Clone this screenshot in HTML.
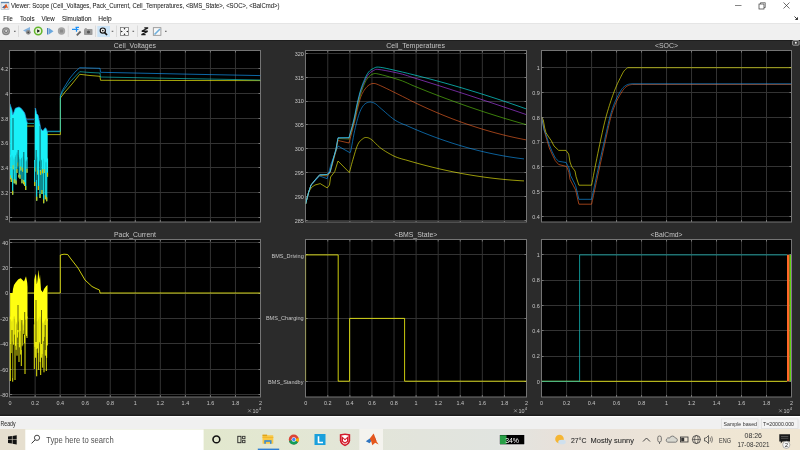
<!DOCTYPE html>
<html><head><meta charset="utf-8"><style>
html,body{margin:0;padding:0;width:800px;height:450px;overflow:hidden;background:#2b2b2b;}
svg#plots{position:absolute;left:0;top:0;will-change:transform;}
.tk{font-size:5.45px;fill:#c6c6c6;}
.ti{font-size:7.4px;fill:#c8c8c8;}
</style></head><body>
<svg id="plots" width="800" height="450" viewBox="0 0 800 450" font-family='"Liberation Sans", sans-serif'>
<defs><linearGradient id="tg" x1="0" x2="1" y1="0" y2="0"><stop offset="0" stop-color="#e4e8d2"/><stop offset="0.25" stop-color="#e2e8cd"/><stop offset="0.41" stop-color="#e3e6d6"/><stop offset="0.525" stop-color="#e2e4dc"/><stop offset="0.625" stop-color="#e1e4e0"/><stop offset="0.7" stop-color="#e8e1da"/><stop offset="0.8" stop-color="#ebe3d8"/><stop offset="0.9" stop-color="#efe6d4"/><stop offset="1" stop-color="#f0e6d2"/></linearGradient><clipPath id="cv"><rect x="10.1" y="50.5" width="250.4" height="171.5"/></clipPath><clipPath id="ct"><rect x="305.7" y="50.5" width="220.8" height="171.5"/></clipPath><clipPath id="cs"><rect x="541.6" y="50.5" width="249.89999999999998" height="171.5"/></clipPath><clipPath id="ci"><rect x="10.1" y="239.5" width="250.4" height="157.5"/></clipPath><clipPath id="cb"><rect x="305.7" y="239.5" width="220.8" height="157.5"/></clipPath><clipPath id="cc"><rect x="541.6" y="239.5" width="249.89999999999998" height="157.5"/></clipPath></defs>
<rect x="0" y="40" width="800" height="376" fill="#2b2b2b"/>
<rect x="0" y="40" width="800" height="1" fill="#1e1e1e"/>
<rect x="10.1" y="50.5" width="250.4" height="171.5" fill="#000"/><line x1="35.14" y1="50.5" x2="35.14" y2="222" stroke="#333333" stroke-width="1"/><line x1="35.14" y1="222" x2="35.14" y2="220" stroke="#8a8a8a" stroke-width="0.8"/><line x1="35.14" y1="50.5" x2="35.14" y2="52.5" stroke="#8a8a8a" stroke-width="0.8"/><line x1="60.18" y1="50.5" x2="60.18" y2="222" stroke="#333333" stroke-width="1"/><line x1="60.18" y1="222" x2="60.18" y2="220" stroke="#8a8a8a" stroke-width="0.8"/><line x1="60.18" y1="50.5" x2="60.18" y2="52.5" stroke="#8a8a8a" stroke-width="0.8"/><line x1="85.22" y1="50.5" x2="85.22" y2="222" stroke="#333333" stroke-width="1"/><line x1="85.22" y1="222" x2="85.22" y2="220" stroke="#8a8a8a" stroke-width="0.8"/><line x1="85.22" y1="50.5" x2="85.22" y2="52.5" stroke="#8a8a8a" stroke-width="0.8"/><line x1="110.26" y1="50.5" x2="110.26" y2="222" stroke="#333333" stroke-width="1"/><line x1="110.26" y1="222" x2="110.26" y2="220" stroke="#8a8a8a" stroke-width="0.8"/><line x1="110.26" y1="50.5" x2="110.26" y2="52.5" stroke="#8a8a8a" stroke-width="0.8"/><line x1="135.30" y1="50.5" x2="135.30" y2="222" stroke="#333333" stroke-width="1"/><line x1="135.30" y1="222" x2="135.30" y2="220" stroke="#8a8a8a" stroke-width="0.8"/><line x1="135.30" y1="50.5" x2="135.30" y2="52.5" stroke="#8a8a8a" stroke-width="0.8"/><line x1="160.34" y1="50.5" x2="160.34" y2="222" stroke="#333333" stroke-width="1"/><line x1="160.34" y1="222" x2="160.34" y2="220" stroke="#8a8a8a" stroke-width="0.8"/><line x1="160.34" y1="50.5" x2="160.34" y2="52.5" stroke="#8a8a8a" stroke-width="0.8"/><line x1="185.38" y1="50.5" x2="185.38" y2="222" stroke="#333333" stroke-width="1"/><line x1="185.38" y1="222" x2="185.38" y2="220" stroke="#8a8a8a" stroke-width="0.8"/><line x1="185.38" y1="50.5" x2="185.38" y2="52.5" stroke="#8a8a8a" stroke-width="0.8"/><line x1="210.42" y1="50.5" x2="210.42" y2="222" stroke="#333333" stroke-width="1"/><line x1="210.42" y1="222" x2="210.42" y2="220" stroke="#8a8a8a" stroke-width="0.8"/><line x1="210.42" y1="50.5" x2="210.42" y2="52.5" stroke="#8a8a8a" stroke-width="0.8"/><line x1="235.46" y1="50.5" x2="235.46" y2="222" stroke="#333333" stroke-width="1"/><line x1="235.46" y1="222" x2="235.46" y2="220" stroke="#8a8a8a" stroke-width="0.8"/><line x1="235.46" y1="50.5" x2="235.46" y2="52.5" stroke="#8a8a8a" stroke-width="0.8"/><line x1="10.1" y1="217.50" x2="260.5" y2="217.50" stroke="#333333" stroke-width="1"/><line x1="10.1" y1="217.50" x2="12.1" y2="217.50" stroke="#8a8a8a" stroke-width="0.8"/><line x1="260.5" y1="217.50" x2="258.5" y2="217.50" stroke="#8a8a8a" stroke-width="0.8"/><text x="8.2" y="219.60" text-anchor="end" class="tk">3</text><line x1="10.1" y1="192.50" x2="260.5" y2="192.50" stroke="#333333" stroke-width="1"/><line x1="10.1" y1="192.50" x2="12.1" y2="192.50" stroke="#8a8a8a" stroke-width="0.8"/><line x1="260.5" y1="192.50" x2="258.5" y2="192.50" stroke="#8a8a8a" stroke-width="0.8"/><text x="8.2" y="194.88" text-anchor="end" class="tk">3.2</text><line x1="10.1" y1="167.50" x2="260.5" y2="167.50" stroke="#333333" stroke-width="1"/><line x1="10.1" y1="167.50" x2="12.1" y2="167.50" stroke="#8a8a8a" stroke-width="0.8"/><line x1="260.5" y1="167.50" x2="258.5" y2="167.50" stroke="#8a8a8a" stroke-width="0.8"/><text x="8.2" y="170.17" text-anchor="end" class="tk">3.4</text><line x1="10.1" y1="143.50" x2="260.5" y2="143.50" stroke="#333333" stroke-width="1"/><line x1="10.1" y1="143.50" x2="12.1" y2="143.50" stroke="#8a8a8a" stroke-width="0.8"/><line x1="260.5" y1="143.50" x2="258.5" y2="143.50" stroke="#8a8a8a" stroke-width="0.8"/><text x="8.2" y="145.45" text-anchor="end" class="tk">3.6</text><line x1="10.1" y1="118.50" x2="260.5" y2="118.50" stroke="#333333" stroke-width="1"/><line x1="10.1" y1="118.50" x2="12.1" y2="118.50" stroke="#8a8a8a" stroke-width="0.8"/><line x1="260.5" y1="118.50" x2="258.5" y2="118.50" stroke="#8a8a8a" stroke-width="0.8"/><text x="8.2" y="120.73" text-anchor="end" class="tk">3.8</text><line x1="10.1" y1="93.50" x2="260.5" y2="93.50" stroke="#333333" stroke-width="1"/><line x1="10.1" y1="93.50" x2="12.1" y2="93.50" stroke="#8a8a8a" stroke-width="0.8"/><line x1="260.5" y1="93.50" x2="258.5" y2="93.50" stroke="#8a8a8a" stroke-width="0.8"/><text x="8.2" y="96.02" text-anchor="end" class="tk">4</text><line x1="10.1" y1="68.50" x2="260.5" y2="68.50" stroke="#333333" stroke-width="1"/><line x1="10.1" y1="68.50" x2="12.1" y2="68.50" stroke="#8a8a8a" stroke-width="0.8"/><line x1="260.5" y1="68.50" x2="258.5" y2="68.50" stroke="#8a8a8a" stroke-width="0.8"/><text x="8.2" y="71.30" text-anchor="end" class="tk">4.2</text><rect x="305.7" y="50.5" width="220.8" height="171.5" fill="#000"/><line x1="327.78" y1="50.5" x2="327.78" y2="222" stroke="#333333" stroke-width="1"/><line x1="327.78" y1="222" x2="327.78" y2="220" stroke="#8a8a8a" stroke-width="0.8"/><line x1="327.78" y1="50.5" x2="327.78" y2="52.5" stroke="#8a8a8a" stroke-width="0.8"/><line x1="349.86" y1="50.5" x2="349.86" y2="222" stroke="#333333" stroke-width="1"/><line x1="349.86" y1="222" x2="349.86" y2="220" stroke="#8a8a8a" stroke-width="0.8"/><line x1="349.86" y1="50.5" x2="349.86" y2="52.5" stroke="#8a8a8a" stroke-width="0.8"/><line x1="371.94" y1="50.5" x2="371.94" y2="222" stroke="#333333" stroke-width="1"/><line x1="371.94" y1="222" x2="371.94" y2="220" stroke="#8a8a8a" stroke-width="0.8"/><line x1="371.94" y1="50.5" x2="371.94" y2="52.5" stroke="#8a8a8a" stroke-width="0.8"/><line x1="394.02" y1="50.5" x2="394.02" y2="222" stroke="#333333" stroke-width="1"/><line x1="394.02" y1="222" x2="394.02" y2="220" stroke="#8a8a8a" stroke-width="0.8"/><line x1="394.02" y1="50.5" x2="394.02" y2="52.5" stroke="#8a8a8a" stroke-width="0.8"/><line x1="416.10" y1="50.5" x2="416.10" y2="222" stroke="#333333" stroke-width="1"/><line x1="416.10" y1="222" x2="416.10" y2="220" stroke="#8a8a8a" stroke-width="0.8"/><line x1="416.10" y1="50.5" x2="416.10" y2="52.5" stroke="#8a8a8a" stroke-width="0.8"/><line x1="438.18" y1="50.5" x2="438.18" y2="222" stroke="#333333" stroke-width="1"/><line x1="438.18" y1="222" x2="438.18" y2="220" stroke="#8a8a8a" stroke-width="0.8"/><line x1="438.18" y1="50.5" x2="438.18" y2="52.5" stroke="#8a8a8a" stroke-width="0.8"/><line x1="460.26" y1="50.5" x2="460.26" y2="222" stroke="#333333" stroke-width="1"/><line x1="460.26" y1="222" x2="460.26" y2="220" stroke="#8a8a8a" stroke-width="0.8"/><line x1="460.26" y1="50.5" x2="460.26" y2="52.5" stroke="#8a8a8a" stroke-width="0.8"/><line x1="482.34" y1="50.5" x2="482.34" y2="222" stroke="#333333" stroke-width="1"/><line x1="482.34" y1="222" x2="482.34" y2="220" stroke="#8a8a8a" stroke-width="0.8"/><line x1="482.34" y1="50.5" x2="482.34" y2="52.5" stroke="#8a8a8a" stroke-width="0.8"/><line x1="504.42" y1="50.5" x2="504.42" y2="222" stroke="#333333" stroke-width="1"/><line x1="504.42" y1="222" x2="504.42" y2="220" stroke="#8a8a8a" stroke-width="0.8"/><line x1="504.42" y1="50.5" x2="504.42" y2="52.5" stroke="#8a8a8a" stroke-width="0.8"/><line x1="305.7" y1="220.50" x2="526.5" y2="220.50" stroke="#333333" stroke-width="1"/><line x1="305.7" y1="220.50" x2="307.7" y2="220.50" stroke="#8a8a8a" stroke-width="0.8"/><line x1="526.5" y1="220.50" x2="524.5" y2="220.50" stroke="#8a8a8a" stroke-width="0.8"/><text x="303.8" y="222.60" text-anchor="end" class="tk">285</text><line x1="305.7" y1="196.50" x2="526.5" y2="196.50" stroke="#333333" stroke-width="1"/><line x1="305.7" y1="196.50" x2="307.7" y2="196.50" stroke="#8a8a8a" stroke-width="0.8"/><line x1="526.5" y1="196.50" x2="524.5" y2="196.50" stroke="#8a8a8a" stroke-width="0.8"/><text x="303.8" y="198.76" text-anchor="end" class="tk">290</text><line x1="305.7" y1="172.50" x2="526.5" y2="172.50" stroke="#333333" stroke-width="1"/><line x1="305.7" y1="172.50" x2="307.7" y2="172.50" stroke="#8a8a8a" stroke-width="0.8"/><line x1="526.5" y1="172.50" x2="524.5" y2="172.50" stroke="#8a8a8a" stroke-width="0.8"/><text x="303.8" y="174.91" text-anchor="end" class="tk">295</text><line x1="305.7" y1="148.50" x2="526.5" y2="148.50" stroke="#333333" stroke-width="1"/><line x1="305.7" y1="148.50" x2="307.7" y2="148.50" stroke="#8a8a8a" stroke-width="0.8"/><line x1="526.5" y1="148.50" x2="524.5" y2="148.50" stroke="#8a8a8a" stroke-width="0.8"/><text x="303.8" y="151.07" text-anchor="end" class="tk">300</text><line x1="305.7" y1="124.50" x2="526.5" y2="124.50" stroke="#333333" stroke-width="1"/><line x1="305.7" y1="124.50" x2="307.7" y2="124.50" stroke="#8a8a8a" stroke-width="0.8"/><line x1="526.5" y1="124.50" x2="524.5" y2="124.50" stroke="#8a8a8a" stroke-width="0.8"/><text x="303.8" y="127.23" text-anchor="end" class="tk">305</text><line x1="305.7" y1="101.50" x2="526.5" y2="101.50" stroke="#333333" stroke-width="1"/><line x1="305.7" y1="101.50" x2="307.7" y2="101.50" stroke="#8a8a8a" stroke-width="0.8"/><line x1="526.5" y1="101.50" x2="524.5" y2="101.50" stroke="#8a8a8a" stroke-width="0.8"/><text x="303.8" y="103.39" text-anchor="end" class="tk">310</text><line x1="305.7" y1="77.50" x2="526.5" y2="77.50" stroke="#333333" stroke-width="1"/><line x1="305.7" y1="77.50" x2="307.7" y2="77.50" stroke="#8a8a8a" stroke-width="0.8"/><line x1="526.5" y1="77.50" x2="524.5" y2="77.50" stroke="#8a8a8a" stroke-width="0.8"/><text x="303.8" y="79.54" text-anchor="end" class="tk">315</text><line x1="305.7" y1="53.50" x2="526.5" y2="53.50" stroke="#333333" stroke-width="1"/><line x1="305.7" y1="53.50" x2="307.7" y2="53.50" stroke="#8a8a8a" stroke-width="0.8"/><line x1="526.5" y1="53.50" x2="524.5" y2="53.50" stroke="#8a8a8a" stroke-width="0.8"/><text x="303.8" y="55.70" text-anchor="end" class="tk">320</text><rect x="541.6" y="50.5" width="249.89999999999998" height="171.5" fill="#000"/><line x1="566.59" y1="50.5" x2="566.59" y2="222" stroke="#333333" stroke-width="1"/><line x1="566.59" y1="222" x2="566.59" y2="220" stroke="#8a8a8a" stroke-width="0.8"/><line x1="566.59" y1="50.5" x2="566.59" y2="52.5" stroke="#8a8a8a" stroke-width="0.8"/><line x1="591.58" y1="50.5" x2="591.58" y2="222" stroke="#333333" stroke-width="1"/><line x1="591.58" y1="222" x2="591.58" y2="220" stroke="#8a8a8a" stroke-width="0.8"/><line x1="591.58" y1="50.5" x2="591.58" y2="52.5" stroke="#8a8a8a" stroke-width="0.8"/><line x1="616.57" y1="50.5" x2="616.57" y2="222" stroke="#333333" stroke-width="1"/><line x1="616.57" y1="222" x2="616.57" y2="220" stroke="#8a8a8a" stroke-width="0.8"/><line x1="616.57" y1="50.5" x2="616.57" y2="52.5" stroke="#8a8a8a" stroke-width="0.8"/><line x1="641.56" y1="50.5" x2="641.56" y2="222" stroke="#333333" stroke-width="1"/><line x1="641.56" y1="222" x2="641.56" y2="220" stroke="#8a8a8a" stroke-width="0.8"/><line x1="641.56" y1="50.5" x2="641.56" y2="52.5" stroke="#8a8a8a" stroke-width="0.8"/><line x1="666.55" y1="50.5" x2="666.55" y2="222" stroke="#333333" stroke-width="1"/><line x1="666.55" y1="222" x2="666.55" y2="220" stroke="#8a8a8a" stroke-width="0.8"/><line x1="666.55" y1="50.5" x2="666.55" y2="52.5" stroke="#8a8a8a" stroke-width="0.8"/><line x1="691.54" y1="50.5" x2="691.54" y2="222" stroke="#333333" stroke-width="1"/><line x1="691.54" y1="222" x2="691.54" y2="220" stroke="#8a8a8a" stroke-width="0.8"/><line x1="691.54" y1="50.5" x2="691.54" y2="52.5" stroke="#8a8a8a" stroke-width="0.8"/><line x1="716.53" y1="50.5" x2="716.53" y2="222" stroke="#333333" stroke-width="1"/><line x1="716.53" y1="222" x2="716.53" y2="220" stroke="#8a8a8a" stroke-width="0.8"/><line x1="716.53" y1="50.5" x2="716.53" y2="52.5" stroke="#8a8a8a" stroke-width="0.8"/><line x1="741.52" y1="50.5" x2="741.52" y2="222" stroke="#333333" stroke-width="1"/><line x1="741.52" y1="222" x2="741.52" y2="220" stroke="#8a8a8a" stroke-width="0.8"/><line x1="741.52" y1="50.5" x2="741.52" y2="52.5" stroke="#8a8a8a" stroke-width="0.8"/><line x1="766.51" y1="50.5" x2="766.51" y2="222" stroke="#333333" stroke-width="1"/><line x1="766.51" y1="222" x2="766.51" y2="220" stroke="#8a8a8a" stroke-width="0.8"/><line x1="766.51" y1="50.5" x2="766.51" y2="52.5" stroke="#8a8a8a" stroke-width="0.8"/><line x1="541.6" y1="216.50" x2="791.5" y2="216.50" stroke="#333333" stroke-width="1"/><line x1="541.6" y1="216.50" x2="543.6" y2="216.50" stroke="#8a8a8a" stroke-width="0.8"/><line x1="791.5" y1="216.50" x2="789.5" y2="216.50" stroke="#8a8a8a" stroke-width="0.8"/><text x="539.7" y="218.90" text-anchor="end" class="tk">0.4</text><line x1="541.6" y1="191.50" x2="791.5" y2="191.50" stroke="#333333" stroke-width="1"/><line x1="541.6" y1="191.50" x2="543.6" y2="191.50" stroke="#8a8a8a" stroke-width="0.8"/><line x1="791.5" y1="191.50" x2="789.5" y2="191.50" stroke="#8a8a8a" stroke-width="0.8"/><text x="539.7" y="194.08" text-anchor="end" class="tk">0.5</text><line x1="541.6" y1="166.50" x2="791.5" y2="166.50" stroke="#333333" stroke-width="1"/><line x1="541.6" y1="166.50" x2="543.6" y2="166.50" stroke="#8a8a8a" stroke-width="0.8"/><line x1="791.5" y1="166.50" x2="789.5" y2="166.50" stroke="#8a8a8a" stroke-width="0.8"/><text x="539.7" y="169.27" text-anchor="end" class="tk">0.6</text><line x1="541.6" y1="142.50" x2="791.5" y2="142.50" stroke="#333333" stroke-width="1"/><line x1="541.6" y1="142.50" x2="543.6" y2="142.50" stroke="#8a8a8a" stroke-width="0.8"/><line x1="791.5" y1="142.50" x2="789.5" y2="142.50" stroke="#8a8a8a" stroke-width="0.8"/><text x="539.7" y="144.45" text-anchor="end" class="tk">0.7</text><line x1="541.6" y1="117.50" x2="791.5" y2="117.50" stroke="#333333" stroke-width="1"/><line x1="541.6" y1="117.50" x2="543.6" y2="117.50" stroke="#8a8a8a" stroke-width="0.8"/><line x1="791.5" y1="117.50" x2="789.5" y2="117.50" stroke="#8a8a8a" stroke-width="0.8"/><text x="539.7" y="119.63" text-anchor="end" class="tk">0.8</text><line x1="541.6" y1="92.50" x2="791.5" y2="92.50" stroke="#333333" stroke-width="1"/><line x1="541.6" y1="92.50" x2="543.6" y2="92.50" stroke="#8a8a8a" stroke-width="0.8"/><line x1="791.5" y1="92.50" x2="789.5" y2="92.50" stroke="#8a8a8a" stroke-width="0.8"/><text x="539.7" y="94.82" text-anchor="end" class="tk">0.9</text><line x1="541.6" y1="67.50" x2="791.5" y2="67.50" stroke="#333333" stroke-width="1"/><line x1="541.6" y1="67.50" x2="543.6" y2="67.50" stroke="#8a8a8a" stroke-width="0.8"/><line x1="791.5" y1="67.50" x2="789.5" y2="67.50" stroke="#8a8a8a" stroke-width="0.8"/><text x="539.7" y="70.00" text-anchor="end" class="tk">1</text><rect x="10.1" y="239.5" width="250.4" height="157.5" fill="#000"/><line x1="35.14" y1="239.5" x2="35.14" y2="397" stroke="#333333" stroke-width="1"/><line x1="35.14" y1="397" x2="35.14" y2="395" stroke="#8a8a8a" stroke-width="0.8"/><line x1="35.14" y1="239.5" x2="35.14" y2="241.5" stroke="#8a8a8a" stroke-width="0.8"/><line x1="60.18" y1="239.5" x2="60.18" y2="397" stroke="#333333" stroke-width="1"/><line x1="60.18" y1="397" x2="60.18" y2="395" stroke="#8a8a8a" stroke-width="0.8"/><line x1="60.18" y1="239.5" x2="60.18" y2="241.5" stroke="#8a8a8a" stroke-width="0.8"/><line x1="85.22" y1="239.5" x2="85.22" y2="397" stroke="#333333" stroke-width="1"/><line x1="85.22" y1="397" x2="85.22" y2="395" stroke="#8a8a8a" stroke-width="0.8"/><line x1="85.22" y1="239.5" x2="85.22" y2="241.5" stroke="#8a8a8a" stroke-width="0.8"/><line x1="110.26" y1="239.5" x2="110.26" y2="397" stroke="#333333" stroke-width="1"/><line x1="110.26" y1="397" x2="110.26" y2="395" stroke="#8a8a8a" stroke-width="0.8"/><line x1="110.26" y1="239.5" x2="110.26" y2="241.5" stroke="#8a8a8a" stroke-width="0.8"/><line x1="135.30" y1="239.5" x2="135.30" y2="397" stroke="#333333" stroke-width="1"/><line x1="135.30" y1="397" x2="135.30" y2="395" stroke="#8a8a8a" stroke-width="0.8"/><line x1="135.30" y1="239.5" x2="135.30" y2="241.5" stroke="#8a8a8a" stroke-width="0.8"/><line x1="160.34" y1="239.5" x2="160.34" y2="397" stroke="#333333" stroke-width="1"/><line x1="160.34" y1="397" x2="160.34" y2="395" stroke="#8a8a8a" stroke-width="0.8"/><line x1="160.34" y1="239.5" x2="160.34" y2="241.5" stroke="#8a8a8a" stroke-width="0.8"/><line x1="185.38" y1="239.5" x2="185.38" y2="397" stroke="#333333" stroke-width="1"/><line x1="185.38" y1="397" x2="185.38" y2="395" stroke="#8a8a8a" stroke-width="0.8"/><line x1="185.38" y1="239.5" x2="185.38" y2="241.5" stroke="#8a8a8a" stroke-width="0.8"/><line x1="210.42" y1="239.5" x2="210.42" y2="397" stroke="#333333" stroke-width="1"/><line x1="210.42" y1="397" x2="210.42" y2="395" stroke="#8a8a8a" stroke-width="0.8"/><line x1="210.42" y1="239.5" x2="210.42" y2="241.5" stroke="#8a8a8a" stroke-width="0.8"/><line x1="235.46" y1="239.5" x2="235.46" y2="397" stroke="#333333" stroke-width="1"/><line x1="235.46" y1="397" x2="235.46" y2="395" stroke="#8a8a8a" stroke-width="0.8"/><line x1="235.46" y1="239.5" x2="235.46" y2="241.5" stroke="#8a8a8a" stroke-width="0.8"/><line x1="10.1" y1="394.50" x2="260.5" y2="394.50" stroke="#333333" stroke-width="1"/><line x1="10.1" y1="394.50" x2="12.1" y2="394.50" stroke="#8a8a8a" stroke-width="0.8"/><line x1="260.5" y1="394.50" x2="258.5" y2="394.50" stroke="#8a8a8a" stroke-width="0.8"/><text x="8.2" y="396.90" text-anchor="end" class="tk">-80</text><line x1="10.1" y1="369.50" x2="260.5" y2="369.50" stroke="#333333" stroke-width="1"/><line x1="10.1" y1="369.50" x2="12.1" y2="369.50" stroke="#8a8a8a" stroke-width="0.8"/><line x1="260.5" y1="369.50" x2="258.5" y2="369.50" stroke="#8a8a8a" stroke-width="0.8"/><text x="8.2" y="371.53" text-anchor="end" class="tk">-60</text><line x1="10.1" y1="343.50" x2="260.5" y2="343.50" stroke="#333333" stroke-width="1"/><line x1="10.1" y1="343.50" x2="12.1" y2="343.50" stroke="#8a8a8a" stroke-width="0.8"/><line x1="260.5" y1="343.50" x2="258.5" y2="343.50" stroke="#8a8a8a" stroke-width="0.8"/><text x="8.2" y="346.17" text-anchor="end" class="tk">-40</text><line x1="10.1" y1="318.50" x2="260.5" y2="318.50" stroke="#333333" stroke-width="1"/><line x1="10.1" y1="318.50" x2="12.1" y2="318.50" stroke="#8a8a8a" stroke-width="0.8"/><line x1="260.5" y1="318.50" x2="258.5" y2="318.50" stroke="#8a8a8a" stroke-width="0.8"/><text x="8.2" y="320.80" text-anchor="end" class="tk">-20</text><line x1="10.1" y1="293.50" x2="260.5" y2="293.50" stroke="#333333" stroke-width="1"/><line x1="10.1" y1="293.50" x2="12.1" y2="293.50" stroke="#8a8a8a" stroke-width="0.8"/><line x1="260.5" y1="293.50" x2="258.5" y2="293.50" stroke="#8a8a8a" stroke-width="0.8"/><text x="8.2" y="295.43" text-anchor="end" class="tk">0</text><line x1="10.1" y1="267.50" x2="260.5" y2="267.50" stroke="#333333" stroke-width="1"/><line x1="10.1" y1="267.50" x2="12.1" y2="267.50" stroke="#8a8a8a" stroke-width="0.8"/><line x1="260.5" y1="267.50" x2="258.5" y2="267.50" stroke="#8a8a8a" stroke-width="0.8"/><text x="8.2" y="270.07" text-anchor="end" class="tk">20</text><line x1="10.1" y1="242.50" x2="260.5" y2="242.50" stroke="#333333" stroke-width="1"/><line x1="10.1" y1="242.50" x2="12.1" y2="242.50" stroke="#8a8a8a" stroke-width="0.8"/><line x1="260.5" y1="242.50" x2="258.5" y2="242.50" stroke="#8a8a8a" stroke-width="0.8"/><text x="8.2" y="244.70" text-anchor="end" class="tk">40</text><text x="10.10" y="405" text-anchor="middle" class="tk">0</text><text x="35.14" y="405" text-anchor="middle" class="tk">0.2</text><text x="60.18" y="405" text-anchor="middle" class="tk">0.4</text><text x="85.22" y="405" text-anchor="middle" class="tk">0.6</text><text x="110.26" y="405" text-anchor="middle" class="tk">0.8</text><text x="135.30" y="405" text-anchor="middle" class="tk">1</text><text x="160.34" y="405" text-anchor="middle" class="tk">1.2</text><text x="185.38" y="405" text-anchor="middle" class="tk">1.4</text><text x="210.42" y="405" text-anchor="middle" class="tk">1.6</text><text x="235.46" y="405" text-anchor="middle" class="tk">1.8</text><text x="260.50" y="405" text-anchor="middle" class="tk">2</text><path d="M248.10,409.30 l2.9,3 m0,-3 l-2.9,3" stroke="#c6c6c6" stroke-width="0.55"/><text x="252.60" y="413" class="tk" font-size="5.9">10<tspan font-size="4.2" dy="-2.8">4</tspan></text><rect x="305.7" y="239.5" width="220.8" height="157.5" fill="#000"/><line x1="327.78" y1="239.5" x2="327.78" y2="397" stroke="#333333" stroke-width="1"/><line x1="327.78" y1="397" x2="327.78" y2="395" stroke="#8a8a8a" stroke-width="0.8"/><line x1="327.78" y1="239.5" x2="327.78" y2="241.5" stroke="#8a8a8a" stroke-width="0.8"/><line x1="349.86" y1="239.5" x2="349.86" y2="397" stroke="#333333" stroke-width="1"/><line x1="349.86" y1="397" x2="349.86" y2="395" stroke="#8a8a8a" stroke-width="0.8"/><line x1="349.86" y1="239.5" x2="349.86" y2="241.5" stroke="#8a8a8a" stroke-width="0.8"/><line x1="371.94" y1="239.5" x2="371.94" y2="397" stroke="#333333" stroke-width="1"/><line x1="371.94" y1="397" x2="371.94" y2="395" stroke="#8a8a8a" stroke-width="0.8"/><line x1="371.94" y1="239.5" x2="371.94" y2="241.5" stroke="#8a8a8a" stroke-width="0.8"/><line x1="394.02" y1="239.5" x2="394.02" y2="397" stroke="#333333" stroke-width="1"/><line x1="394.02" y1="397" x2="394.02" y2="395" stroke="#8a8a8a" stroke-width="0.8"/><line x1="394.02" y1="239.5" x2="394.02" y2="241.5" stroke="#8a8a8a" stroke-width="0.8"/><line x1="416.10" y1="239.5" x2="416.10" y2="397" stroke="#333333" stroke-width="1"/><line x1="416.10" y1="397" x2="416.10" y2="395" stroke="#8a8a8a" stroke-width="0.8"/><line x1="416.10" y1="239.5" x2="416.10" y2="241.5" stroke="#8a8a8a" stroke-width="0.8"/><line x1="438.18" y1="239.5" x2="438.18" y2="397" stroke="#333333" stroke-width="1"/><line x1="438.18" y1="397" x2="438.18" y2="395" stroke="#8a8a8a" stroke-width="0.8"/><line x1="438.18" y1="239.5" x2="438.18" y2="241.5" stroke="#8a8a8a" stroke-width="0.8"/><line x1="460.26" y1="239.5" x2="460.26" y2="397" stroke="#333333" stroke-width="1"/><line x1="460.26" y1="397" x2="460.26" y2="395" stroke="#8a8a8a" stroke-width="0.8"/><line x1="460.26" y1="239.5" x2="460.26" y2="241.5" stroke="#8a8a8a" stroke-width="0.8"/><line x1="482.34" y1="239.5" x2="482.34" y2="397" stroke="#333333" stroke-width="1"/><line x1="482.34" y1="397" x2="482.34" y2="395" stroke="#8a8a8a" stroke-width="0.8"/><line x1="482.34" y1="239.5" x2="482.34" y2="241.5" stroke="#8a8a8a" stroke-width="0.8"/><line x1="504.42" y1="239.5" x2="504.42" y2="397" stroke="#333333" stroke-width="1"/><line x1="504.42" y1="397" x2="504.42" y2="395" stroke="#8a8a8a" stroke-width="0.8"/><line x1="504.42" y1="239.5" x2="504.42" y2="241.5" stroke="#8a8a8a" stroke-width="0.8"/><line x1="305.7" y1="254.50" x2="526.5" y2="254.50" stroke="#333333" stroke-width="1"/><line x1="305.7" y1="254.50" x2="307.7" y2="254.50" stroke="#8a8a8a" stroke-width="0.8"/><line x1="526.5" y1="254.50" x2="524.5" y2="254.50" stroke="#8a8a8a" stroke-width="0.8"/><line x1="305.7" y1="318.50" x2="526.5" y2="318.50" stroke="#333333" stroke-width="1"/><line x1="305.7" y1="318.50" x2="307.7" y2="318.50" stroke="#8a8a8a" stroke-width="0.8"/><line x1="526.5" y1="318.50" x2="524.5" y2="318.50" stroke="#8a8a8a" stroke-width="0.8"/><line x1="305.7" y1="381.50" x2="526.5" y2="381.50" stroke="#333333" stroke-width="1"/><line x1="305.7" y1="381.50" x2="307.7" y2="381.50" stroke="#8a8a8a" stroke-width="0.8"/><line x1="526.5" y1="381.50" x2="524.5" y2="381.50" stroke="#8a8a8a" stroke-width="0.8"/><text x="305.70" y="405" text-anchor="middle" class="tk">0</text><text x="327.78" y="405" text-anchor="middle" class="tk">0.2</text><text x="349.86" y="405" text-anchor="middle" class="tk">0.4</text><text x="371.94" y="405" text-anchor="middle" class="tk">0.6</text><text x="394.02" y="405" text-anchor="middle" class="tk">0.8</text><text x="416.10" y="405" text-anchor="middle" class="tk">1</text><text x="438.18" y="405" text-anchor="middle" class="tk">1.2</text><text x="460.26" y="405" text-anchor="middle" class="tk">1.4</text><text x="482.34" y="405" text-anchor="middle" class="tk">1.6</text><text x="504.42" y="405" text-anchor="middle" class="tk">1.8</text><text x="526.50" y="405" text-anchor="middle" class="tk">2</text><path d="M514.10,409.30 l2.9,3 m0,-3 l-2.9,3" stroke="#c6c6c6" stroke-width="0.55"/><text x="518.60" y="413" class="tk" font-size="5.9">10<tspan font-size="4.2" dy="-2.8">4</tspan></text><rect x="541.6" y="239.5" width="249.89999999999998" height="157.5" fill="#000"/><line x1="566.59" y1="239.5" x2="566.59" y2="397" stroke="#333333" stroke-width="1"/><line x1="566.59" y1="397" x2="566.59" y2="395" stroke="#8a8a8a" stroke-width="0.8"/><line x1="566.59" y1="239.5" x2="566.59" y2="241.5" stroke="#8a8a8a" stroke-width="0.8"/><line x1="591.58" y1="239.5" x2="591.58" y2="397" stroke="#333333" stroke-width="1"/><line x1="591.58" y1="397" x2="591.58" y2="395" stroke="#8a8a8a" stroke-width="0.8"/><line x1="591.58" y1="239.5" x2="591.58" y2="241.5" stroke="#8a8a8a" stroke-width="0.8"/><line x1="616.57" y1="239.5" x2="616.57" y2="397" stroke="#333333" stroke-width="1"/><line x1="616.57" y1="397" x2="616.57" y2="395" stroke="#8a8a8a" stroke-width="0.8"/><line x1="616.57" y1="239.5" x2="616.57" y2="241.5" stroke="#8a8a8a" stroke-width="0.8"/><line x1="641.56" y1="239.5" x2="641.56" y2="397" stroke="#333333" stroke-width="1"/><line x1="641.56" y1="397" x2="641.56" y2="395" stroke="#8a8a8a" stroke-width="0.8"/><line x1="641.56" y1="239.5" x2="641.56" y2="241.5" stroke="#8a8a8a" stroke-width="0.8"/><line x1="666.55" y1="239.5" x2="666.55" y2="397" stroke="#333333" stroke-width="1"/><line x1="666.55" y1="397" x2="666.55" y2="395" stroke="#8a8a8a" stroke-width="0.8"/><line x1="666.55" y1="239.5" x2="666.55" y2="241.5" stroke="#8a8a8a" stroke-width="0.8"/><line x1="691.54" y1="239.5" x2="691.54" y2="397" stroke="#333333" stroke-width="1"/><line x1="691.54" y1="397" x2="691.54" y2="395" stroke="#8a8a8a" stroke-width="0.8"/><line x1="691.54" y1="239.5" x2="691.54" y2="241.5" stroke="#8a8a8a" stroke-width="0.8"/><line x1="716.53" y1="239.5" x2="716.53" y2="397" stroke="#333333" stroke-width="1"/><line x1="716.53" y1="397" x2="716.53" y2="395" stroke="#8a8a8a" stroke-width="0.8"/><line x1="716.53" y1="239.5" x2="716.53" y2="241.5" stroke="#8a8a8a" stroke-width="0.8"/><line x1="741.52" y1="239.5" x2="741.52" y2="397" stroke="#333333" stroke-width="1"/><line x1="741.52" y1="397" x2="741.52" y2="395" stroke="#8a8a8a" stroke-width="0.8"/><line x1="741.52" y1="239.5" x2="741.52" y2="241.5" stroke="#8a8a8a" stroke-width="0.8"/><line x1="766.51" y1="239.5" x2="766.51" y2="397" stroke="#333333" stroke-width="1"/><line x1="766.51" y1="397" x2="766.51" y2="395" stroke="#8a8a8a" stroke-width="0.8"/><line x1="766.51" y1="239.5" x2="766.51" y2="241.5" stroke="#8a8a8a" stroke-width="0.8"/><line x1="541.6" y1="381.50" x2="791.5" y2="381.50" stroke="#333333" stroke-width="1"/><line x1="541.6" y1="381.50" x2="543.6" y2="381.50" stroke="#8a8a8a" stroke-width="0.8"/><line x1="791.5" y1="381.50" x2="789.5" y2="381.50" stroke="#8a8a8a" stroke-width="0.8"/><text x="539.7" y="383.60" text-anchor="end" class="tk">0</text><line x1="541.6" y1="356.50" x2="791.5" y2="356.50" stroke="#333333" stroke-width="1"/><line x1="541.6" y1="356.50" x2="543.6" y2="356.50" stroke="#8a8a8a" stroke-width="0.8"/><line x1="791.5" y1="356.50" x2="789.5" y2="356.50" stroke="#8a8a8a" stroke-width="0.8"/><text x="539.7" y="358.32" text-anchor="end" class="tk">0.2</text><line x1="541.6" y1="330.50" x2="791.5" y2="330.50" stroke="#333333" stroke-width="1"/><line x1="541.6" y1="330.50" x2="543.6" y2="330.50" stroke="#8a8a8a" stroke-width="0.8"/><line x1="791.5" y1="330.50" x2="789.5" y2="330.50" stroke="#8a8a8a" stroke-width="0.8"/><text x="539.7" y="333.04" text-anchor="end" class="tk">0.4</text><line x1="541.6" y1="305.50" x2="791.5" y2="305.50" stroke="#333333" stroke-width="1"/><line x1="541.6" y1="305.50" x2="543.6" y2="305.50" stroke="#8a8a8a" stroke-width="0.8"/><line x1="791.5" y1="305.50" x2="789.5" y2="305.50" stroke="#8a8a8a" stroke-width="0.8"/><text x="539.7" y="307.76" text-anchor="end" class="tk">0.6</text><line x1="541.6" y1="280.50" x2="791.5" y2="280.50" stroke="#333333" stroke-width="1"/><line x1="541.6" y1="280.50" x2="543.6" y2="280.50" stroke="#8a8a8a" stroke-width="0.8"/><line x1="791.5" y1="280.50" x2="789.5" y2="280.50" stroke="#8a8a8a" stroke-width="0.8"/><text x="539.7" y="282.48" text-anchor="end" class="tk">0.8</text><line x1="541.6" y1="254.50" x2="791.5" y2="254.50" stroke="#333333" stroke-width="1"/><line x1="541.6" y1="254.50" x2="543.6" y2="254.50" stroke="#8a8a8a" stroke-width="0.8"/><line x1="791.5" y1="254.50" x2="789.5" y2="254.50" stroke="#8a8a8a" stroke-width="0.8"/><text x="539.7" y="257.20" text-anchor="end" class="tk">1</text><text x="541.60" y="405" text-anchor="middle" class="tk">0</text><text x="566.59" y="405" text-anchor="middle" class="tk">0.2</text><text x="591.58" y="405" text-anchor="middle" class="tk">0.4</text><text x="616.57" y="405" text-anchor="middle" class="tk">0.6</text><text x="641.56" y="405" text-anchor="middle" class="tk">0.8</text><text x="666.55" y="405" text-anchor="middle" class="tk">1</text><text x="691.54" y="405" text-anchor="middle" class="tk">1.2</text><text x="716.53" y="405" text-anchor="middle" class="tk">1.4</text><text x="741.52" y="405" text-anchor="middle" class="tk">1.6</text><text x="766.51" y="405" text-anchor="middle" class="tk">1.8</text><text x="791.50" y="405" text-anchor="middle" class="tk">2</text><path d="M779.10,409.30 l2.9,3 m0,-3 l-2.9,3" stroke="#c6c6c6" stroke-width="0.55"/><text x="783.60" y="413" class="tk" font-size="5.9">10<tspan font-size="4.2" dy="-2.8">4</tspan></text>
<rect x="9.5" y="50.5" width="251.0" height="171.5" fill="none" stroke="#747474" stroke-width="1"/><rect x="305.5" y="50.5" width="221.0" height="171.5" fill="none" stroke="#747474" stroke-width="1"/><rect x="541.5" y="50.5" width="250.0" height="171.5" fill="none" stroke="#747474" stroke-width="1"/><rect x="9.5" y="239.5" width="251.0" height="157.5" fill="none" stroke="#747474" stroke-width="1"/><rect x="305.5" y="239.5" width="221.0" height="157.5" fill="none" stroke="#747474" stroke-width="1"/><rect x="541.5" y="239.5" width="250.0" height="157.5" fill="none" stroke="#747474" stroke-width="1"/>
<polygon points="10.00,103.70 10.25,104.53 10.50,105.35 10.75,106.17 11.00,107.00 11.25,107.75 11.50,108.50 11.75,109.25 12.00,110.00 12.25,111.79 12.50,113.57 12.75,114.88 13.00,114.31 13.25,113.73 13.50,113.15 13.75,112.58 14.00,112.00 14.25,111.29 14.50,110.58 14.75,109.87 15.00,109.15 15.25,108.44 15.50,108.23 15.75,108.14 16.00,108.05 16.25,107.96 16.50,107.88 16.75,107.79 17.00,107.70 17.25,107.61 17.50,107.53 17.75,107.44 18.00,107.35 18.25,107.26 18.50,107.17 18.75,107.09 19.00,107.00 19.25,107.15 19.50,107.29 19.75,107.44 20.00,107.59 20.25,107.74 20.50,107.88 20.75,108.06 21.00,108.33 21.25,108.61 21.50,108.89 21.75,109.17 22.00,109.44 22.25,109.72 22.50,110.00 22.75,110.34 23.00,110.68 23.25,111.02 23.50,111.36 23.75,111.70 24.00,112.05 24.25,112.39 24.50,112.73 24.75,113.19 25.00,114.15 25.25,115.12 25.50,116.08 25.75,117.04 26.00,118.00 26.25,118.96 26.50,119.92 26.75,120.88 27.00,121.85 27.25,122.81 27.25,158.43 27.00,159.14 26.75,159.86 26.50,160.57 26.25,161.29 26.00,162.00 25.75,161.50 25.50,161.00 25.25,160.50 25.00,160.00 24.75,159.50 24.50,159.00 24.25,158.50 24.00,158.00 23.75,157.50 23.50,157.00 23.25,156.50 23.00,156.00 22.75,156.33 22.50,156.67 22.25,157.00 22.00,157.33 21.75,157.67 21.50,158.00 21.25,158.33 21.00,158.67 20.75,159.00 20.50,159.33 20.25,159.67 20.00,160.00 19.75,159.33 19.50,158.67 19.25,158.00 19.00,157.33 18.75,156.67 18.50,156.00 18.25,155.33 18.00,154.67 17.75,154.00 17.50,153.33 17.25,152.67 17.00,152.00 16.75,152.67 16.50,153.33 16.25,154.00 16.00,154.67 15.75,155.33 15.50,156.00 15.25,156.67 15.00,157.33 14.75,158.00 14.50,158.67 14.25,159.33 14.00,160.00 13.75,159.38 13.50,158.75 13.25,158.12 13.00,157.50 12.75,156.88 12.50,156.25 12.25,155.62 12.00,155.00 11.75,155.38 11.50,155.75 11.25,156.12 11.00,156.50 10.75,156.88 10.50,157.25 10.25,157.62 10.00,158.00" fill="#19f0f8" clip-path="url(#cv)"/><line x1="10.7" y1="154.95" x2="10.7" y2="179.3" stroke="#19f0f8" stroke-width="1.15"/><line x1="10.7" y1="175.3" x2="10.7" y2="179.3" stroke="#d8c000" stroke-width="1.15"/><line x1="11.35" y1="153.975" x2="11.35" y2="181.94619546605608" stroke="#19f0f8" stroke-width="1.15"/><line x1="11.35" y1="177.94619546605608" x2="11.35" y2="181.94619546605608" stroke="#d8c000" stroke-width="1.15"/><line x1="12.7" y1="154.75" x2="12.7" y2="194.7" stroke="#19f0f8" stroke-width="1.15"/><line x1="12.7" y1="190.7" x2="12.7" y2="194.7" stroke="#d8c000" stroke-width="1.15"/><line x1="13.25" y1="156.125" x2="13.25" y2="169.19434829459223" stroke="#19f0f8" stroke-width="1.15"/><line x1="13.25" y1="165.19434829459223" x2="13.25" y2="169.19434829459223" stroke="#d8c000" stroke-width="1.15"/><line x1="14.2" y1="157.46666666666667" x2="14.2" y2="183.20543856208363" stroke="#19f0f8" stroke-width="1.15"/><line x1="14.2" y1="179.20543856208363" x2="14.2" y2="183.20543856208363" stroke="#d8c000" stroke-width="1.15"/><line x1="15" y1="155.33333333333334" x2="15" y2="183.3" stroke="#19f0f8" stroke-width="1.15"/><line x1="15" y1="179.3" x2="15" y2="183.3" stroke="#d8c000" stroke-width="1.15"/><line x1="16.1" y1="152.4" x2="16.1" y2="184.60717882348584" stroke="#19f0f8" stroke-width="1.15"/><line x1="16.1" y1="180.60717882348584" x2="16.1" y2="184.60717882348584" stroke="#d8c000" stroke-width="1.15"/><line x1="17.05" y1="150.13333333333333" x2="17.05" y2="172.94848776158562" stroke="#19f0f8" stroke-width="1.15"/><line x1="17.05" y1="168.94848776158562" x2="17.05" y2="172.94848776158562" stroke="#d8c000" stroke-width="1.15"/><line x1="18.0" y1="152.66666666666666" x2="18.0" y2="166.46076687667397" stroke="#19f0f8" stroke-width="1.15"/><line x1="18.0" y1="162.46076687667397" x2="18.0" y2="166.46076687667397" stroke="#d8c000" stroke-width="1.15"/><line x1="18.95" y1="155.2" x2="18.95" y2="177.58909824468049" stroke="#19f0f8" stroke-width="1.15"/><line x1="18.95" y1="173.58909824468049" x2="18.95" y2="177.58909824468049" stroke="#d8c000" stroke-width="1.15"/><line x1="20" y1="158.0" x2="20" y2="178.7" stroke="#19f0f8" stroke-width="1.15"/><line x1="20" y1="174.7" x2="20" y2="178.7" stroke="#d8c000" stroke-width="1.15"/><line x1="20.85" y1="156.86666666666667" x2="20.85" y2="170.39551173700286" stroke="#19f0f8" stroke-width="1.15"/><line x1="20.85" y1="166.39551173700286" x2="20.85" y2="170.39551173700286" stroke="#d8c000" stroke-width="1.15"/><line x1="22" y1="155.33333333333334" x2="22" y2="183.3" stroke="#19f0f8" stroke-width="1.15"/><line x1="22" y1="179.3" x2="22" y2="183.3" stroke="#d8c000" stroke-width="1.15"/><line x1="22.75" y1="154.33333333333334" x2="22.75" y2="171.65171250926696" stroke="#19f0f8" stroke-width="1.15"/><line x1="22.75" y1="167.65171250926696" x2="22.75" y2="171.65171250926696" stroke="#d8c000" stroke-width="1.15"/><line x1="23.7" y1="155.4" x2="23.7" y2="184.2815243318753" stroke="#19f0f8" stroke-width="1.15"/><line x1="23.7" y1="180.2815243318753" x2="23.7" y2="184.2815243318753" stroke="#d8c000" stroke-width="1.15"/><line x1="24.7" y1="157.4" x2="24.7" y2="186" stroke="#19f0f8" stroke-width="1.15"/><line x1="24.7" y1="182" x2="24.7" y2="186" stroke="#d8c000" stroke-width="1.15"/><line x1="25.7" y1="159.4" x2="25.7" y2="190" stroke="#19f0f8" stroke-width="1.15"/><line x1="25.7" y1="186" x2="25.7" y2="190" stroke="#d8c000" stroke-width="1.15"/><line x1="27" y1="157.14285714285714" x2="27" y2="172.7" stroke="#19f0f8" stroke-width="1.15"/><line x1="27" y1="168.7" x2="27" y2="172.7" stroke="#d8c000" stroke-width="1.15"/><line x1="13" y1="118" x2="13" y2="150" stroke="#000" stroke-width="0.6"/><line x1="18.2" y1="150" x2="18.2" y2="175" stroke="#000" stroke-width="0.6"/><line x1="23.8" y1="152" x2="23.8" y2="180" stroke="#000" stroke-width="0.6"/><polygon points="34.70,123.00 34.95,108.79 35.20,108.43 35.45,108.07 35.70,108.95 35.95,110.14 36.20,111.33 36.45,112.51 36.70,113.70 36.95,113.95 37.20,114.20 37.45,114.45 37.70,114.70 37.95,114.95 38.20,115.93 38.45,117.10 38.70,118.27 38.95,119.43 39.20,120.60 39.45,121.77 39.70,123.05 39.95,124.36 40.20,125.68 40.45,126.99 40.70,128.30 40.95,128.64 41.20,128.98 41.45,129.31 41.70,129.65 41.95,129.99 42.20,130.32 42.45,130.66 42.70,131.00 42.95,130.69 43.20,130.38 43.45,130.06 43.70,129.74 43.95,129.42 44.20,129.11 44.45,128.79 44.70,128.47 44.95,128.15 45.20,127.83 45.45,127.86 45.70,128.13 45.95,128.40 46.20,128.68 46.45,128.95 46.70,129.67 46.95,130.50 47.20,131.33 47.45,132.17 47.70,133.00 47.70,160.17 47.45,160.58 47.20,161.00 46.95,161.42 46.70,161.83 46.45,162.25 46.20,162.67 45.95,162.92 45.70,162.50 45.45,162.08 45.20,161.67 44.95,161.25 44.70,160.83 44.45,160.42 44.20,160.00 43.95,159.58 43.70,159.17 43.45,158.75 43.20,158.33 42.95,158.07 42.70,158.40 42.45,158.73 42.20,159.07 41.95,159.40 41.70,159.73 41.45,160.07 41.20,160.40 40.95,160.73 40.70,161.07 40.45,161.40 40.20,161.73 39.95,161.90 39.70,161.40 39.45,160.90 39.20,160.40 38.95,159.90 38.70,159.40 38.45,158.90 38.20,158.40 37.95,157.90 37.70,157.40 37.45,156.90 37.20,156.40 36.95,156.13 36.70,156.78 36.45,157.43 36.20,158.09 35.95,158.74 35.70,159.39 35.45,160.04 35.20,160.70 34.95,161.35 34.70,162.00" fill="#19f0f8" clip-path="url(#cv)"/><line x1="34.7" y1="160.0" x2="34.7" y2="186" stroke="#19f0f8" stroke-width="1.15"/><line x1="34.7" y1="182" x2="34.7" y2="186" stroke="#d8c000" stroke-width="1.15"/><line x1="35.85" y1="157.0" x2="35.85" y2="171.49733507352693" stroke="#19f0f8" stroke-width="1.15"/><line x1="35.85" y1="167.49733507352693" x2="35.85" y2="171.49733507352693" stroke="#d8c000" stroke-width="1.15"/><line x1="36.7" y1="154.78260869565216" x2="36.7" y2="200.7" stroke="#19f0f8" stroke-width="1.15"/><line x1="36.7" y1="196.7" x2="36.7" y2="200.7" stroke="#d8c000" stroke-width="1.15"/><line x1="37.75" y1="155.5" x2="37.75" y2="174.44195320495916" stroke="#19f0f8" stroke-width="1.15"/><line x1="37.75" y1="170.44195320495916" x2="37.75" y2="174.44195320495916" stroke="#d8c000" stroke-width="1.15"/><line x1="38.4" y1="156.8" x2="38.4" y2="190" stroke="#19f0f8" stroke-width="1.15"/><line x1="38.4" y1="186" x2="38.4" y2="190" stroke="#d8c000" stroke-width="1.15"/><line x1="40" y1="160.0" x2="40" y2="198" stroke="#19f0f8" stroke-width="1.15"/><line x1="40" y1="194" x2="40" y2="198" stroke="#d8c000" stroke-width="1.15"/><line x1="40.6" y1="159.2" x2="40.6" y2="174.76711038225915" stroke="#19f0f8" stroke-width="1.15"/><line x1="40.6" y1="170.76711038225915" x2="40.6" y2="174.76711038225915" stroke="#d8c000" stroke-width="1.15"/><line x1="42" y1="157.33333333333334" x2="42" y2="194" stroke="#19f0f8" stroke-width="1.15"/><line x1="42" y1="190" x2="42" y2="194" stroke="#d8c000" stroke-width="1.15"/><line x1="42.5" y1="156.66666666666666" x2="42.5" y2="173.2741770929155" stroke="#19f0f8" stroke-width="1.15"/><line x1="42.5" y1="169.2741770929155" x2="42.5" y2="173.2741770929155" stroke="#d8c000" stroke-width="1.15"/><line x1="43.7" y1="157.16666666666669" x2="43.7" y2="203.3" stroke="#19f0f8" stroke-width="1.15"/><line x1="43.7" y1="199.3" x2="43.7" y2="203.3" stroke="#d8c000" stroke-width="1.15"/><line x1="44.4" y1="158.33333333333334" x2="44.4" y2="172.91269969099264" stroke="#19f0f8" stroke-width="1.15"/><line x1="44.4" y1="168.91269969099264" x2="44.4" y2="172.91269969099264" stroke="#d8c000" stroke-width="1.15"/><line x1="45.3" y1="159.83333333333331" x2="45.3" y2="199.3" stroke="#19f0f8" stroke-width="1.15"/><line x1="45.3" y1="195.3" x2="45.3" y2="199.3" stroke="#d8c000" stroke-width="1.15"/><line x1="46.7" y1="159.83333333333331" x2="46.7" y2="201.3" stroke="#19f0f8" stroke-width="1.15"/><line x1="46.7" y1="197.3" x2="46.7" y2="201.3" stroke="#d8c000" stroke-width="1.15"/><line x1="47.5" y1="158.5" x2="47.5" y2="176.7" stroke="#19f0f8" stroke-width="1.15"/><line x1="47.5" y1="172.7" x2="47.5" y2="176.7" stroke="#d8c000" stroke-width="1.15"/><line x1="40.1" y1="126" x2="40.1" y2="170" stroke="#000" stroke-width="0.6"/><line x1="36.2" y1="150" x2="36.2" y2="180" stroke="#000" stroke-width="0.6"/><polyline points="10.00,103.70 11.00,107.00 12.00,110.00 12.70,115.00 14.00,112.00 15.30,108.30 17.00,107.70 19.00,107.00 20.70,108.00 22.50,110.00 24.70,113.00 26.00,118.00 27.30,123.00" fill="none" stroke="#2a8fe0" stroke-width="0.7" stroke-linejoin="round" clip-path="url(#cv)" opacity="1"/><polyline points="34.80,109.00 35.50,108.00 36.70,113.70 38.00,115.00 39.50,122.00 40.70,128.30 42.70,131.00 43.50,130.00 45.30,127.70 46.50,129.00 47.70,133.00" fill="none" stroke="#2a8fe0" stroke-width="0.7" stroke-linejoin="round" clip-path="url(#cv)" opacity="1"/><polyline points="27.00,119.70 34.00,119.70" fill="none" stroke="#1f7fd0" stroke-width="0.8" stroke-linejoin="round" opacity="1"/><polyline points="27.00,123.40 34.00,123.40" fill="none" stroke="#14c0c0" stroke-width="0.8" stroke-linejoin="round" opacity="1"/><polyline points="27.00,126.10 34.00,126.10" fill="none" stroke="#c0c010" stroke-width="0.8" stroke-linejoin="round" opacity="1"/><polyline points="47.30,131.20 60.40,131.20 60.40,96.00 62.00,91.00 65.00,86.00 70.00,78.00 75.00,72.00 79.70,67.70 90.00,68.00 100.00,68.30 100.50,72.30 180.00,74.00 260.50,75.60" fill="none" stroke="#129fff" stroke-width="0.65" stroke-linejoin="round" clip-path="url(#cv)" opacity="1"/><polyline points="47.30,134.60 60.40,134.60 60.40,98.00 65.00,92.00 72.00,84.00 79.70,74.30 90.00,75.50 100.00,76.30 100.50,80.30 180.00,80.50 260.50,80.60" fill="none" stroke="#ffff11" stroke-width="0.65" stroke-linejoin="round" clip-path="url(#cv)" opacity="1"/><polyline points="47.30,131.70 60.40,131.70 60.40,96.00 63.00,91.00 70.00,82.00 79.70,71.70 90.00,72.50 100.00,73.00 100.50,77.00 180.00,78.50 260.50,80.00" fill="none" stroke="#14c8c8" stroke-width="0.65" stroke-linejoin="round" clip-path="url(#cv)" opacity="1"/><polyline points="305.60,204.00 306.60,200.00 308.70,192.00 311.60,187.30 315.00,185.00 320.20,183.60 327.20,187.90 329.50,185.00 330.60,177.00 334.70,171.70 338.00,161.00 349.40,172.60 349.78,171.17 350.29,169.21 350.90,166.88 351.58,164.34 352.29,161.76 353.00,159.30 353.73,156.81 354.51,154.13 355.33,151.41 356.16,148.80 356.99,146.45 357.80,144.50 358.60,143.00 359.40,141.83 360.21,140.92 361.00,140.19 361.76,139.58 362.50,139.00 363.18,138.47 363.80,138.06 364.41,137.76 365.02,137.57 365.67,137.48 366.40,137.50 367.17,137.59 367.94,137.75 368.76,138.01 369.65,138.42 370.65,139.00 371.80,139.80 373.08,140.89 374.47,142.25 375.98,143.79 377.59,145.41 379.33,147.01 381.20,148.50 383.27,149.93 385.54,151.40 387.94,152.85 390.37,154.23 392.75,155.49 395.00,156.58 397.24,157.49 399.58,158.28 401.86,158.94 403.96,159.50 405.72,159.95 407.00,160.30 410.00,161.19 413.00,162.05 416.00,162.90 419.00,163.73 422.00,164.54 425.00,165.33 428.00,166.10 431.00,166.86 434.00,167.59 437.00,168.31 440.00,169.00 443.00,169.68 446.00,170.34 449.00,170.98 452.00,171.61 455.00,172.21 458.00,172.80 461.00,173.36 464.00,173.91 467.00,174.44 470.00,174.95 473.00,175.44 476.00,175.91 479.00,176.37 482.00,176.80 485.00,177.22 488.00,177.62 491.00,178.00 494.00,178.36 497.00,178.70 500.00,179.02 503.00,179.32 506.00,179.61 509.00,179.88 512.00,180.13 515.00,180.35 518.00,180.56 521.00,180.76 524.00,180.93" fill="none" stroke="#ffff11" stroke-width="0.6" stroke-linejoin="round" clip-path="url(#ct)" opacity="1"/><polyline points="305.60,204.00 306.60,200.00 308.70,192.00 311.00,185.50 315.00,181.00 319.60,176.00 327.20,178.70 331.00,164.00 336.00,151.00 338.00,146.00 349.40,152.40 349.52,152.43 349.67,152.64 349.86,152.81 350.10,152.70 350.41,152.07 350.80,150.70 351.30,148.37 351.89,145.22 352.55,141.56 353.26,137.69 353.98,133.90 354.70,130.50 355.43,127.37 356.18,124.26 356.95,121.23 357.73,118.36 358.52,115.72 359.30,113.40 360.07,111.41 360.83,109.69 361.59,108.20 362.37,106.91 363.17,105.79 364.00,104.80 364.87,103.96 365.77,103.31 366.70,102.83 367.64,102.48 368.57,102.24 369.50,102.10 370.41,102.05 371.31,102.12 372.21,102.31 373.11,102.60 374.04,103.00 375.00,103.50 375.90,104.07 376.73,104.72 377.58,105.47 378.54,106.36 379.72,107.43 381.20,108.70 383.08,110.31 385.30,112.27 387.74,114.40 390.25,116.54 392.72,118.51 395.00,120.15 397.24,121.48 399.58,122.65 401.86,123.65 403.96,124.50 405.72,125.19 407.00,125.73 410.00,127.06 413.00,128.36 416.00,129.64 419.00,130.90 422.00,132.13 425.00,133.33 428.00,134.51 431.00,135.67 434.00,136.80 437.00,137.90 440.00,138.98 443.00,140.03 446.00,141.06 449.00,142.06 452.00,143.04 455.00,143.99 458.00,144.92 461.00,145.82 464.00,146.70 467.00,147.55 470.00,148.38 473.00,149.18 476.00,149.95 479.00,150.70 482.00,151.43 485.00,152.13 488.00,152.80 491.00,153.45 494.00,154.08 497.00,154.68 500.00,155.25 503.00,155.80 506.00,156.32 509.00,156.82 512.00,157.29 515.00,157.74 518.00,158.16 521.00,158.56 524.00,158.93" fill="none" stroke="#129fff" stroke-width="0.6" stroke-linejoin="round" clip-path="url(#ct)" opacity="1"/><polyline points="305.60,204.00 306.60,200.00 308.70,192.00 311.00,185.00 315.00,180.20 319.60,175.30 327.00,176.00 330.00,173.00 333.00,162.00 336.00,151.00 338.00,140.50 349.00,143.00 349.68,140.41 350.65,136.74 351.78,132.44 352.96,127.93 354.08,123.64 355.00,120.00 355.73,116.98 356.36,114.23 356.93,111.71 357.45,109.36 357.96,107.14 358.50,105.00 359.03,102.98 359.51,101.13 359.99,99.41 360.49,97.79 361.05,96.23 361.70,94.70 362.45,93.18 363.29,91.69 364.17,90.26 365.10,88.93 366.05,87.73 367.00,86.70 367.94,85.83 368.90,85.08 369.88,84.47 370.88,84.00 371.92,83.67 373.00,83.50 374.00,83.46 374.88,83.53 375.79,83.75 376.90,84.15 378.35,84.76 380.30,85.60 382.95,86.80 386.23,88.36 389.86,90.13 393.54,91.95 397.02,93.68 400.00,95.16 402.58,96.44 405.01,97.66 407.23,98.79 409.17,99.78 410.78,100.60 412.00,101.22 415.00,102.68 418.00,104.11 421.00,105.52 424.00,106.91 427.00,108.27 430.00,109.61 433.00,110.92 436.00,112.21 439.00,113.48 442.00,114.72 445.00,115.94 448.00,117.14 451.00,118.31 454.00,119.46 457.00,120.58 460.00,121.68 463.00,122.76 466.00,123.81 469.00,124.84 472.00,125.84 475.00,126.82 478.00,127.78 481.00,128.72 484.00,129.62 487.00,130.51 490.00,131.37 493.00,132.21 496.00,133.02 499.00,133.81 502.00,134.58 505.00,135.32 508.00,136.04 511.00,136.74 514.00,137.41 517.00,138.06 520.00,138.68 523.00,139.28 526.00,139.86" fill="none" stroke="#ff6929" stroke-width="0.6" stroke-linejoin="round" clip-path="url(#ct)" opacity="1"/><polyline points="305.60,204.00 306.60,200.00 308.70,192.00 311.00,185.00 315.00,180.00 319.60,175.00 327.00,175.00 330.00,172.50 333.00,161.00 336.00,149.50 338.00,138.50 349.00,139.00 349.56,137.16 350.33,134.63 351.25,131.62 352.22,128.37 353.17,125.09 354.00,122.00 354.72,119.01 355.41,115.93 356.06,112.81 356.70,109.74 357.34,106.78 358.00,104.00 358.66,101.40 359.30,98.93 359.94,96.56 360.59,94.30 361.28,92.11 362.00,90.00 362.76,87.92 363.56,85.89 364.38,83.94 365.22,82.11 366.10,80.45 367.00,79.00 367.93,77.76 368.89,76.69 369.88,75.79 370.89,75.04 371.93,74.45 373.00,74.00 373.96,73.69 374.78,73.54 375.62,73.53 376.67,73.67 378.07,73.96 380.00,74.40 382.67,75.05 386.00,75.94 389.69,76.97 393.44,78.07 396.98,79.14 400.00,80.12 402.60,81.06 405.04,82.04 407.25,83.01 409.19,83.89 410.79,84.64 412.00,85.18 415.00,86.42 418.00,87.64 421.00,88.86 424.00,90.06 427.00,91.26 430.00,92.44 433.00,93.61 436.00,94.77 439.00,95.93 442.00,97.06 445.00,98.19 448.00,99.31 451.00,100.42 454.00,101.51 457.00,102.60 460.00,103.67 463.00,104.74 466.00,105.79 469.00,106.83 472.00,107.86 475.00,108.88 478.00,109.89 481.00,110.89 484.00,111.88 487.00,112.86 490.00,113.82 493.00,114.78 496.00,115.72 499.00,116.66 502.00,117.58 505.00,118.49 508.00,119.39 511.00,120.28 514.00,121.16 517.00,122.03 520.00,122.89 523.00,123.73 526.00,124.57" fill="none" stroke="#63d412" stroke-width="0.6" stroke-linejoin="round" clip-path="url(#ct)" opacity="1"/><polyline points="305.60,204.00 306.60,200.00 308.70,192.00 311.00,185.00 315.00,180.00 319.60,174.80 327.00,174.50 330.00,172.00 333.00,160.00 336.00,149.00 338.00,137.80 349.00,138.00 349.53,136.16 350.28,133.63 351.16,130.62 352.10,127.37 353.00,124.09 353.80,121.00 354.49,118.02 355.13,114.96 355.74,111.88 356.34,108.81 356.96,105.84 357.60,103.00 358.26,100.30 358.90,97.69 359.56,95.17 360.25,92.72 360.99,90.33 361.80,88.00 362.70,85.66 363.67,83.30 364.69,81.01 365.74,78.86 366.78,76.93 367.80,75.30 368.80,74.00 369.80,72.97 370.79,72.17 371.78,71.53 372.75,70.99 373.70,70.50 374.44,70.05 374.93,69.70 375.41,69.45 376.09,69.32 377.22,69.33 379.00,69.50 381.70,69.89 385.17,70.50 389.08,71.24 393.09,72.06 396.84,72.86 400.00,73.57 402.66,74.25 405.11,74.97 407.31,75.67 409.22,76.32 410.80,76.86 412.00,77.26 415.00,78.19 418.00,79.12 421.00,80.05 424.00,80.99 427.00,81.93 430.00,82.87 433.00,83.82 436.00,84.77 439.00,85.72 442.00,86.67 445.00,87.63 448.00,88.59 451.00,89.55 454.00,90.52 457.00,91.48 460.00,92.46 463.00,93.43 466.00,94.40 469.00,95.38 472.00,96.37 475.00,97.35 478.00,98.34 481.00,99.33 484.00,100.32 487.00,101.32 490.00,102.31 493.00,103.31 496.00,104.32 499.00,105.33 502.00,106.33 505.00,107.35 508.00,108.36 511.00,109.38 514.00,110.40 517.00,111.42 520.00,112.45 523.00,113.48 526.00,114.51" fill="none" stroke="#b845ff" stroke-width="0.6" stroke-linejoin="round" clip-path="url(#ct)" opacity="1"/><polyline points="305.60,204.00 306.60,200.00 308.70,192.00 311.00,185.00 315.00,180.00 319.60,174.80 327.00,174.50 330.00,172.00 333.00,160.00 336.00,149.00 338.00,137.80 349.00,137.50 349.52,135.60 350.25,132.98 351.11,129.88 352.03,126.52 352.91,123.15 353.70,120.00 354.38,117.00 355.02,113.94 355.63,110.86 356.24,107.82 356.85,104.85 357.50,102.00 358.16,99.27 358.80,96.63 359.46,94.06 360.15,91.56 360.89,89.11 361.70,86.70 362.60,84.26 363.57,81.78 364.59,79.36 365.63,77.07 366.68,75.03 367.70,73.30 368.69,71.93 369.68,70.86 370.66,70.02 371.66,69.36 372.67,68.80 373.70,68.30 374.61,67.84 375.37,67.48 376.14,67.22 377.11,67.10 378.43,67.12 380.30,67.30 382.91,67.71 386.18,68.36 389.81,69.16 393.52,70.00 397.01,70.82 400.00,71.50 402.58,72.09 405.01,72.67 407.23,73.21 409.17,73.70 410.78,74.10 412.00,74.40 415.00,75.15 418.00,75.90 421.00,76.67 424.00,77.44 427.00,78.22 430.00,79.01 433.00,79.81 436.00,80.61 439.00,81.43 442.00,82.25 445.00,83.09 448.00,83.93 451.00,84.78 454.00,85.64 457.00,86.50 460.00,87.38 463.00,88.26 466.00,89.16 469.00,90.06 472.00,90.97 475.00,91.89 478.00,92.81 481.00,93.75 484.00,94.69 487.00,95.65 490.00,96.61 493.00,97.58 496.00,98.56 499.00,99.54 502.00,100.54 505.00,101.55 508.00,102.56 511.00,103.58 514.00,104.61 517.00,105.65 520.00,106.70 523.00,107.75 526.00,108.82" fill="none" stroke="#0fffff" stroke-width="0.6" stroke-linejoin="round" clip-path="url(#ct)" opacity="1"/><polyline points="541.60,117.30 543.30,120.00 544.70,128.00 546.00,132.70 548.00,136.00 551.30,140.70 554.00,146.00 558.70,150.40 566.00,150.40 568.70,154.00 570.00,162.00 571.70,166.70 575.00,171.00 576.10,176.70 578.90,185.20 591.60,185.20 592.07,182.77 592.70,179.46 593.46,175.51 594.29,171.19 595.15,166.77 596.00,162.50 596.86,158.22 597.79,153.67 598.74,149.02 599.70,144.42 600.63,140.03 601.50,136.00 602.30,132.37 603.06,129.02 603.78,125.88 604.50,122.87 605.23,119.94 606.00,117.00 606.80,114.07 607.63,111.20 608.47,108.41 609.31,105.69 610.16,103.05 611.00,100.50 611.84,98.03 612.69,95.63 613.53,93.31 614.37,91.09 615.20,88.98 616.00,87.00 616.79,85.15 617.57,83.43 618.34,81.81 619.09,80.30 619.81,78.86 620.50,77.50 621.14,76.21 621.73,74.99 622.30,73.86 622.86,72.82 623.42,71.86 624.00,71.00 624.65,70.23 625.36,69.54 626.07,68.94 626.73,68.44 627.30,68.02 627.70,67.70 791.50,67.70" fill="none" stroke="#ffff11" stroke-width="0.6" stroke-linejoin="round" clip-path="url(#cs)" opacity="1"/><polyline points="541.60,117.30 544.70,132.00 546.70,139.30 549.30,148.00 552.00,154.00 555.30,160.70 558.70,164.50 566.70,166.50 568.90,172.20 570.00,179.40 575.60,190.00 578.90,204.20 591.60,204.20 592.40,200.49 593.51,195.36 594.82,189.29 596.24,182.73 597.66,176.14 599.00,170.00 600.31,164.00 601.69,157.71 603.07,151.39 604.41,145.33 605.64,139.77 606.70,135.00 607.56,131.12 608.27,127.93 608.86,125.25 609.40,122.91 609.93,120.72 610.50,118.50 611.09,116.33 611.67,114.35 612.24,112.53 612.81,110.81 613.39,109.15 614.00,107.50 614.62,105.88 615.24,104.35 615.88,102.88 616.54,101.43 617.24,99.98 618.00,98.50 618.84,96.94 619.76,95.31 620.72,93.68 621.69,92.12 622.62,90.70 623.50,89.50 624.31,88.52 625.07,87.72 625.81,87.06 626.54,86.51 627.26,86.03 628.00,85.60 628.80,85.23 629.67,84.96 630.53,84.76 631.33,84.61 632.01,84.50 632.50,84.40 791.50,84.40" fill="none" stroke="#ff6929" stroke-width="0.6" stroke-linejoin="round" clip-path="url(#cs)" opacity="1"/><polyline points="541.60,117.30 544.00,130.00 546.00,134.70 549.30,144.70 552.00,151.30 555.30,158.00 558.70,161.30 566.10,162.50 568.90,167.80 570.60,175.60 575.60,185.60 578.90,199.30 591.60,199.30 592.35,195.78 593.38,190.91 594.60,185.15 595.92,178.94 597.25,172.74 598.50,167.00 599.72,161.47 601.00,155.74 602.29,150.01 603.54,144.51 604.69,139.43 605.70,135.00 606.53,131.30 607.23,128.17 607.83,125.47 608.38,123.06 608.92,120.78 609.50,118.50 610.09,116.27 610.67,114.22 611.24,112.31 611.81,110.50 612.39,108.74 613.00,107.00 613.62,105.30 614.25,103.67 614.89,102.09 615.55,100.56 616.25,99.03 617.00,97.50 617.82,95.91 618.69,94.27 619.61,92.64 620.53,91.09 621.44,89.69 622.30,88.50 623.12,87.55 623.93,86.77 624.72,86.15 625.49,85.64 626.25,85.20 627.00,84.80 627.78,84.47 628.59,84.23 629.39,84.07 630.13,83.96 630.75,83.88 631.20,83.80 791.50,83.80" fill="none" stroke="#129fff" stroke-width="0.6" stroke-linejoin="round" clip-path="url(#cs)" opacity="1"/><polyline points="305.60,381.20 305.60,254.90 338.20,254.90 338.20,381.20 349.60,381.20 349.60,318.40 404.60,318.40 404.60,381.20 526.50,381.20" fill="none" stroke="#ffff11" stroke-width="0.8" stroke-linejoin="round" clip-path="url(#cb)" opacity="1"/><rect x="787" y="254.9" width="2.6" height="126.4" fill="#ff6929" clip-path="url(#cc)"/><rect x="789.6" y="254.9" width="1.7" height="126.4" fill="#63d412" clip-path="url(#cc)"/><rect x="791.3" y="254.9" width="0.6" height="126.4" fill="#b845ff" clip-path="url(#cc)"/><polyline points="541.50,381.30 787.00,381.30" fill="none" stroke="#ffff11" stroke-width="0.8" stroke-linejoin="round" clip-path="url(#cc)" opacity="1"/><polyline points="541.50,381.30 579.60,381.30 579.60,254.90 787.00,254.90" fill="none" stroke="#13b5b5" stroke-width="0.8" stroke-linejoin="round" clip-path="url(#cc)" opacity="1"/><polygon points="10.00,293.00 10.25,293.00 10.50,293.00 10.75,293.00 11.00,293.00 11.25,293.00 11.50,293.00 11.75,293.00 12.00,293.00 12.25,293.00 12.50,293.00 12.75,291.35 13.00,288.92 13.25,287.94 13.50,286.96 13.75,285.98 14.00,285.00 14.25,284.62 14.50,284.25 14.75,283.88 15.00,283.50 15.25,283.12 15.50,282.75 15.75,282.38 16.00,282.00 16.25,281.72 16.50,281.44 16.75,281.17 17.00,280.89 17.25,280.61 17.50,280.33 17.75,280.06 18.00,279.78 18.25,279.50 18.50,279.22 18.75,278.98 19.00,278.89 19.25,278.81 19.50,278.72 19.75,278.63 20.00,278.55 20.25,278.46 20.50,278.37 20.75,278.35 21.00,278.60 21.25,278.85 21.50,279.10 21.75,279.35 22.00,279.60 22.25,279.85 22.50,280.10 22.75,280.35 23.00,280.58 23.25,280.81 23.50,281.04 23.75,281.27 24.00,281.50 24.25,280.85 24.50,280.20 24.75,279.55 25.00,278.90 25.25,278.25 25.50,277.60 25.75,276.95 26.00,276.30 26.25,277.55 26.50,278.80 26.75,280.05 27.00,281.30 27.25,283.07 27.50,286.92 27.50,318.15 27.25,318.33 27.00,318.52 26.75,318.70 26.50,318.89 26.25,319.07 26.00,319.26 25.75,319.44 25.50,319.63 25.25,319.81 25.00,320.00 24.75,320.75 24.50,321.50 24.25,322.25 24.00,323.00 23.75,323.75 23.50,324.50 23.25,325.25 23.00,326.00 22.75,325.33 22.50,324.67 22.25,324.00 22.00,323.33 21.75,322.67 21.50,322.00 21.25,321.33 21.00,320.67 20.75,320.00 20.50,319.33 20.25,318.67 20.00,318.00 19.75,318.58 19.50,319.17 19.25,319.75 19.00,320.33 18.75,320.92 18.50,321.50 18.25,322.08 18.00,322.67 17.75,323.25 17.50,323.83 17.25,324.42 17.00,325.00 16.75,324.25 16.50,323.50 16.25,322.75 16.00,322.00 15.75,321.25 15.50,320.50 15.25,319.75 15.00,319.00 14.75,318.25 14.50,317.50 14.25,316.75 14.00,316.00 13.75,316.75 13.50,317.50 13.25,318.25 13.00,319.00 12.75,319.75 12.50,320.50 12.25,321.25 12.00,322.00 11.75,321.50 11.50,321.00 11.25,320.50 11.00,320.00 10.75,319.50 10.50,319.00 10.25,318.50 10.00,318.00" fill="#ffff11" clip-path="url(#ci)"/><line x1="10.3" y1="316.6" x2="10.3" y2="381" stroke="#ffff11" stroke-width="0.9"/><line x1="10.95" y1="317.9" x2="10.95" y2="343.9943096520124" stroke="#ffff11" stroke-width="0.9"/><line x1="11.6" y1="319.2" x2="11.6" y2="353.1052646005932" stroke="#ffff11" stroke-width="0.9"/><line x1="12.25" y1="319.25" x2="12.25" y2="341.6412517524943" stroke="#ffff11" stroke-width="0.9"/><line x1="12.7" y1="317.9" x2="12.7" y2="381.7" stroke="#ffff11" stroke-width="0.9"/><line x1="13.55" y1="315.35" x2="13.55" y2="344.6846207212474" stroke="#ffff11" stroke-width="0.9"/><line x1="14.2" y1="314.6" x2="14.2" y2="334.6165085963719" stroke="#ffff11" stroke-width="0.9"/><line x1="15" y1="317.0" x2="15" y2="380" stroke="#ffff11" stroke-width="0.9"/><line x1="15.5" y1="318.5" x2="15.5" y2="345.74706800542003" stroke="#ffff11" stroke-width="0.9"/><line x1="16.15" y1="320.45" x2="16.15" y2="349.8244218129988" stroke="#ffff11" stroke-width="0.9"/><line x1="17" y1="323.0" x2="17" y2="355.7" stroke="#ffff11" stroke-width="0.9"/><line x1="17.45" y1="321.95" x2="17.45" y2="337.5850315656131" stroke="#ffff11" stroke-width="0.9"/><line x1="18.1" y1="320.43333333333334" x2="18.1" y2="332.266763437296" stroke="#ffff11" stroke-width="0.9"/><line x1="19" y1="318.3333333333333" x2="19" y2="362" stroke="#ffff11" stroke-width="0.9"/><line x1="19.4" y1="317.4" x2="19.4" y2="347.335962063531" stroke="#ffff11" stroke-width="0.9"/><line x1="20.05" y1="316.1333333333333" x2="20.05" y2="331.04700840924613" stroke="#ffff11" stroke-width="0.9"/><line x1="20.7" y1="317.8666666666667" x2="20.7" y2="354.55483551996946" stroke="#ffff11" stroke-width="0.9"/><line x1="21.3" y1="319.4666666666667" x2="21.3" y2="366" stroke="#ffff11" stroke-width="0.9"/><line x1="22.0" y1="321.3333333333333" x2="22.0" y2="346.34806333834604" stroke="#ffff11" stroke-width="0.9"/><line x1="22.65" y1="323.06666666666666" x2="22.65" y2="345.3890676144643" stroke="#ffff11" stroke-width="0.9"/><line x1="23.3" y1="323.1" x2="23.3" y2="333.93735237850404" stroke="#ffff11" stroke-width="0.9"/><line x1="23.95" y1="321.15" x2="23.95" y2="330.37501842374013" stroke="#ffff11" stroke-width="0.9"/><line x1="24.6" y1="319.2" x2="24.6" y2="343.209531654262" stroke="#ffff11" stroke-width="0.9"/><line x1="25" y1="318.0" x2="25" y2="374" stroke="#ffff11" stroke-width="0.9"/><line x1="25.9" y1="317.3333333333333" x2="25.9" y2="334.7552065699482" stroke="#ffff11" stroke-width="0.9"/><line x1="26.55" y1="316.85185185185185" x2="26.55" y2="336.0485753416304" stroke="#ffff11" stroke-width="0.9"/><line x1="27" y1="316.51851851851853" x2="27" y2="338" stroke="#ffff11" stroke-width="0.9"/><line x1="18" y1="305" x2="18" y2="330" stroke="#000" stroke-width="0.6"/><line x1="24.7" y1="312" x2="24.7" y2="335" stroke="#000" stroke-width="0.6"/><line x1="12" y1="330" x2="12" y2="378" stroke="#000" stroke-width="0.6"/><line x1="21.9" y1="320" x2="21.9" y2="350" stroke="#000" stroke-width="0.6"/><polygon points="34.00,293.00 34.25,279.75 34.50,278.50 34.75,277.25 35.00,276.00 35.25,275.43 35.50,274.85 35.75,274.27 36.00,273.70 36.25,277.23 36.50,280.76 36.75,284.29 37.00,283.57 37.25,281.79 37.50,280.00 37.75,276.94 38.00,273.89 38.25,270.83 38.50,270.22 38.75,273.28 39.00,276.33 39.25,279.39 39.50,278.37 39.75,276.34 40.00,274.30 40.25,278.23 40.50,282.15 40.75,286.07 41.00,290.00 41.25,290.34 41.50,290.68 41.75,291.01 42.00,291.35 42.25,291.69 42.50,292.03 42.75,292.17 43.00,291.54 43.25,290.90 43.50,290.27 43.75,289.63 44.00,289.00 44.25,288.66 44.50,288.32 44.75,287.99 45.00,287.65 45.25,287.31 45.50,286.98 45.75,286.64 46.00,286.30 46.25,286.08 46.50,285.87 46.75,285.65 47.00,285.43 47.25,285.22 47.50,285.00 47.50,321.53 47.25,320.94 47.00,320.35 46.75,319.76 46.50,319.18 46.25,318.59 46.00,318.00 45.75,318.50 45.50,319.00 45.25,319.50 45.00,320.00 44.75,320.50 44.50,321.00 44.25,321.50 44.00,322.00 43.75,322.50 43.50,323.00 43.25,323.50 43.00,324.00 42.75,323.33 42.50,322.67 42.25,322.00 42.00,321.33 41.75,320.67 41.50,320.00 41.25,319.33 41.00,318.67 40.75,318.00 40.50,317.33 40.25,316.67 40.00,316.00 39.75,316.50 39.50,317.00 39.25,317.50 39.00,318.00 38.75,318.50 38.50,319.00 38.25,319.50 38.00,320.00 37.75,320.50 37.50,321.00 37.25,321.50 37.00,322.00 36.75,321.50 36.50,321.00 36.25,320.50 36.00,320.00 35.75,319.50 35.50,319.00 35.25,318.50 35.00,318.00 34.75,321.00 34.50,324.00 34.25,327.00 34.00,330.00" fill="#ffff11" clip-path="url(#ci)"/><line x1="34.3" y1="324.40000000000003" x2="34.3" y2="369" stroke="#ffff11" stroke-width="0.9"/><line x1="34.95" y1="316.59999999999997" x2="34.95" y2="346.8943401497297" stroke="#ffff11" stroke-width="0.9"/><line x1="35.6" y1="317.2" x2="35.6" y2="357.74553247000034" stroke="#ffff11" stroke-width="0.9"/><line x1="36.25" y1="318.5" x2="36.25" y2="349.0163510986301" stroke="#ffff11" stroke-width="0.9"/><line x1="36.7" y1="319.4" x2="36.7" y2="376.3" stroke="#ffff11" stroke-width="0.9"/><line x1="37.55" y1="318.9" x2="37.55" y2="348.49387510958337" stroke="#ffff11" stroke-width="0.9"/><line x1="38.2" y1="317.6" x2="38.2" y2="352.8861373610399" stroke="#ffff11" stroke-width="0.9"/><line x1="38.7" y1="316.6" x2="38.7" y2="370" stroke="#ffff11" stroke-width="0.9"/><line x1="39.5" y1="315.0" x2="39.5" y2="342.5103982909249" stroke="#ffff11" stroke-width="0.9"/><line x1="40.15" y1="314.4" x2="40.15" y2="361.9367174125033" stroke="#ffff11" stroke-width="0.9"/><line x1="40.7" y1="315.8666666666667" x2="40.7" y2="375" stroke="#ffff11" stroke-width="0.9"/><line x1="41.45" y1="317.8666666666667" x2="41.45" y2="357.68581983630725" stroke="#ffff11" stroke-width="0.9"/><line x1="42.1" y1="319.6" x2="42.1" y2="354.1108597804446" stroke="#ffff11" stroke-width="0.9"/><line x1="42.7" y1="321.2" x2="42.7" y2="367.7" stroke="#ffff11" stroke-width="0.9"/><line x1="43.4" y1="321.2" x2="43.4" y2="341.20097934341345" stroke="#ffff11" stroke-width="0.9"/><line x1="44" y1="320.0" x2="44" y2="372.3" stroke="#ffff11" stroke-width="0.9"/><line x1="44.7" y1="318.6" x2="44.7" y2="336.896034488118" stroke="#ffff11" stroke-width="0.9"/><line x1="45.35" y1="317.3" x2="45.35" y2="355.689772933081" stroke="#ffff11" stroke-width="0.9"/><line x1="46.3" y1="316.70588235294116" x2="46.3" y2="371" stroke="#ffff11" stroke-width="0.9"/><line x1="46.65" y1="317.52941176470586" x2="46.65" y2="357.8577577907918" stroke="#ffff11" stroke-width="0.9"/><line x1="47.3" y1="319.05882352941177" x2="47.3" y2="345.4358653560602" stroke="#ffff11" stroke-width="0.9"/><line x1="36.0" y1="300" x2="36.0" y2="342" stroke="#000" stroke-width="0.6"/><line x1="41.5" y1="310" x2="41.5" y2="344" stroke="#000" stroke-width="0.6"/><line x1="45.2" y1="325" x2="45.2" y2="350" stroke="#000" stroke-width="0.6"/><polyline points="9.50,293.00 10.00,293.00" fill="none" stroke="#ffff11" stroke-width="0.8" stroke-linejoin="round" clip-path="url(#ci)" opacity="1"/><polyline points="27.70,293.00 34.00,293.00" fill="none" stroke="#ffff11" stroke-width="0.8" stroke-linejoin="round" clip-path="url(#ci)" opacity="1"/><polyline points="47.70,293.00 60.30,293.00 60.30,255.00 64.00,254.20 67.70,254.50 71.00,259.00 78.00,268.00 85.00,280.00 92.00,286.50 96.00,288.50 99.50,290.00 100.00,293.00 260.50,293.00" fill="none" stroke="#ffff11" stroke-width="0.8" stroke-linejoin="round" clip-path="url(#ci)" opacity="1"/>
<rect x="0" y="0" width="800" height="23" fill="#fff"/>
<rect x="0" y="23" width="800" height="17" fill="#f0f0f0"/>
<rect x="0" y="23" width="800" height="0.8" fill="#e3e3e3"/>
<rect x="0" y="414.6" width="800" height="1.4" fill="#1c1c1c"/><rect x="0" y="416" width="800" height="13" fill="#f0f0f0"/>
<rect x="0" y="416" width="800" height="1.2" fill="#ffffff"/>
<rect x="0" y="429" width="800" height="21" fill="url(#tg)"/>
<text x="271.60" y="257.9" font-size="6.0" fill="#c6c6c6" textLength="32.13" lengthAdjust="spacingAndGlyphs" >BMS_Driving</text><text x="265.90" y="320.4" font-size="6.0" fill="#c6c6c6" textLength="37.81" lengthAdjust="spacingAndGlyphs" >BMS_Charging</text><text x="268.10" y="383.7" font-size="6.0" fill="#c6c6c6" textLength="35.31" lengthAdjust="spacingAndGlyphs" >BMS_Standby</text><text x="113.80" y="48.2" font-size="7.1" fill="#c4c4c4" textLength="42.17" lengthAdjust="spacingAndGlyphs" >Cell_Voltages</text><text x="386.30" y="48.2" font-size="7.1" fill="#c4c4c4" textLength="58.71" lengthAdjust="spacingAndGlyphs" >Cell_Temperatures</text><text x="654.90" y="47.9" font-size="7.1" fill="#c4c4c4" textLength="23.17" lengthAdjust="spacingAndGlyphs" >&lt;SOC&gt;</text><text x="114.00" y="236.8" font-size="7.1" fill="#c4c4c4" textLength="41.95" lengthAdjust="spacingAndGlyphs" >Pack_Current</text><text x="394.40" y="236.8" font-size="7.1" fill="#c4c4c4" textLength="42.87" lengthAdjust="spacingAndGlyphs" >&lt;BMS_State&gt;</text><text x="650.60" y="236.8" font-size="7.1" fill="#c4c4c4" textLength="31.93" lengthAdjust="spacingAndGlyphs" >&lt;BalCmd&gt;</text><rect x="1" y="2" width="8" height="7.6" fill="#e8edf2" stroke="#9aa6b2" stroke-width="0.5"/><rect x="1" y="2" width="8" height="1.2" fill="#5f86ad"/><path d="M2.2,7.6 L4.6,5.4 L6.2,3.8 L8.2,8.6 L6.4,7.4 L4.8,8.8 Z" fill="#e2561a"/><path d="M2.2,7.6 L4.6,5.4 L5.4,6.6 L3.8,8.2 Z" fill="#3574b8"/><text x="10.90" y="8.3" font-size="7.1" fill="#222" textLength="268.59" lengthAdjust="spacingAndGlyphs" stroke="#222" stroke-width="0.05">Viewer: Scope (Cell_Voltages, Pack_Current, Cell_Temperatures, &lt;BMS_State&gt;, &lt;SOC&gt;, &lt;BalCmd&gt;)</text><line x1="735" y1="5.5" x2="741.5" y2="5.5" stroke="#333" stroke-width="0.6"/><rect x="759" y="4" width="5" height="5" fill="none" stroke="#333" stroke-width="0.7"/><path d="M760.5,4 V2.7 H765.3 V7.5 H764" fill="none" stroke="#333" stroke-width="0.6"/><path d="M783.5,2.5 L789.5,8.5 M789.5,2.5 L783.5,8.5" stroke="#333" stroke-width="0.7"/><path d="M794.5,16.5 L797.5,19.5 M797.5,17.3 V19.5 H795.3" fill="none" stroke="#222" stroke-width="0.9"/><text x="3.30" y="21.2" font-size="7.2" fill="#1e1e1e" textLength="9.41" lengthAdjust="spacingAndGlyphs" stroke="#1e1e1e" stroke-width="0.08">File</text><text x="20.00" y="21.2" font-size="7.2" fill="#1e1e1e" textLength="14.53" lengthAdjust="spacingAndGlyphs" stroke="#1e1e1e" stroke-width="0.08">Tools</text><text x="41.50" y="21.2" font-size="7.2" fill="#1e1e1e" textLength="13.14" lengthAdjust="spacingAndGlyphs" stroke="#1e1e1e" stroke-width="0.08">View</text><text x="62.00" y="21.2" font-size="7.2" fill="#1e1e1e" textLength="29.49" lengthAdjust="spacingAndGlyphs" stroke="#1e1e1e" stroke-width="0.08">Simulation</text><text x="98.20" y="21.2" font-size="7.2" fill="#1e1e1e" textLength="13.48" lengthAdjust="spacingAndGlyphs" stroke="#1e1e1e" stroke-width="0.08">Help</text><line x1="18.5" y1="25.5" x2="18.5" y2="37" stroke="#d6d6d6" stroke-width="0.8"/><line x1="68.3" y1="25.5" x2="68.3" y2="37" stroke="#d6d6d6" stroke-width="0.8"/><line x1="95.5" y1="25.5" x2="95.5" y2="37" stroke="#d6d6d6" stroke-width="0.8"/><line x1="116.5" y1="25.5" x2="116.5" y2="37" stroke="#d6d6d6" stroke-width="0.8"/><line x1="137.5" y1="25.5" x2="137.5" y2="37" stroke="#d6d6d6" stroke-width="0.8"/><rect x="14.0" y="30.8" width="1.6" height="0.9" fill="#444"/><rect x="111.7" y="30.8" width="1.6" height="0.9" fill="#444"/><rect x="132.5" y="30.8" width="1.6" height="0.9" fill="#444"/><rect x="165.0" y="30.8" width="1.6" height="0.9" fill="#444"/><circle cx="6" cy="31.2" r="4" fill="#858585"/><circle cx="6" cy="31.2" r="2.7" fill="#a9a9a9"/><circle cx="6" cy="31.2" r="1.6" fill="#6a6a6a"/><circle cx="6.1" cy="31" r="0.9" fill="#f4f4f4"/><path d="M23,30.5 L30,27 L30,34 Z" fill="#86b2dc"/><circle cx="28.3" cy="32.3" r="2.4" fill="#8c8c8c"/><circle cx="28.3" cy="32.3" r="0.9" fill="#444"/><circle cx="38.2" cy="31" r="3.7" fill="#eaf6dc" stroke="#62b52c" stroke-width="1.5"/><path d="M37.2,29.2 L40,31 L37.2,32.8 Z" fill="#111"/><rect x="47" y="28" width="1.4" height="6.5" fill="#4a7fbf"/><path d="M48.8,28 L53.5,31.2 L48.8,34.5 Z" fill="#6aa8de"/><circle cx="61.5" cy="31" r="3.7" fill="#a4a4a4"/><rect x="60" y="29.5" width="3" height="3" fill="#8a8a8a"/><path d="M72,29.3 H76.5 M75.5,27.4 H79 M76.5,27.4 V31.8 M76.5,29.5 H78.5" stroke="#1e90f5" stroke-width="1.2"/><path d="M76.8,35.3 L80.6,31.5" stroke="#666" stroke-width="1.8"/><rect x="84" y="29" width="8.5" height="6" rx="0.8" fill="#9a9a9a"/><rect x="84.8" y="28" width="2" height="1.2" fill="#aaa"/><circle cx="88.5" cy="32" r="1.6" fill="#555"/><rect x="97.3" y="26" width="12.7" height="11" fill="#cce4f7"/><circle cx="102.8" cy="30.6" r="2.6" fill="#fff" stroke="#111" stroke-width="1.2"/><path d="M104.6,32.5 L107,35" stroke="#111" stroke-width="1.8"/><circle cx="102.8" cy="30.6" r="0.9" fill="#222"/><rect x="120.5" y="27.5" width="8" height="8" fill="#fff" stroke="#777" stroke-width="0.8"/><path d="M121.5,28.5 L127.5,34.5 M127.5,28.5 L121.5,34.5" stroke="#ddd" stroke-width="0.5"/><circle cx="124.5" cy="28.7" r="0.8" fill="#222"/><circle cx="124.5" cy="34.3" r="0.8" fill="#222"/><circle cx="121.7" cy="31.5" r="0.8" fill="#222"/><circle cx="127.3" cy="31.5" r="0.8" fill="#222"/><path d="M144.3,27.2 H148.2 V28.4 L144.2,30.5 H147.8 V31.9 L143.9,34 H145.6 V35.2 H141.3 V34 L145.2,31.9 H141.7 V30.6 L145.8,28.4 H144.3 Z" fill="#1a1a1a"/><rect x="153.3" y="27.7" width="7.6" height="7.6" fill="#f8f8f8" stroke="#8a8a8a" stroke-width="0.8"/><path d="M154.5,34.5 L160,29" stroke="#6fb0dc" stroke-width="1.6"/><rect x="792.6" y="40.6" width="6.4" height="4.6" rx="0.8" fill="#3a3a3a" stroke="#b4b4b4" stroke-width="0.8"/><circle cx="795.8" cy="42.7" r="1" fill="#f0f0f0"/><line x1="790.7" y1="40" x2="790.7" y2="45.5" stroke="#1a1a1a" stroke-width="0.6"/><text x="0.60" y="426" font-size="6.6" fill="#222" textLength="15.00" lengthAdjust="spacingAndGlyphs" >Ready</text><rect x="721.5" y="419" width="36.5" height="9.5" fill="#f3f3f3" stroke="#d9d9d9" stroke-width="0.6"/><rect x="761.5" y="419" width="36.5" height="9.5" fill="#f3f3f3" stroke="#d9d9d9" stroke-width="0.6"/><text x="723.50" y="425.8" font-size="6.1" fill="#333" textLength="33.51" lengthAdjust="spacingAndGlyphs" >Sample based</text><text x="763.00" y="425.8" font-size="6.1" fill="#333" textLength="31.01" lengthAdjust="spacingAndGlyphs" >T=20000.000</text><rect x="0" y="429" width="25.3" height="21" fill="#e6dfcf"/><path d="M8,436.6 L11.9,436 V439.5 H8 Z M12.5,435.9 L16.7,435.2 V439.5 H12.5 Z M8,440.1 H11.9 V443.6 L8,443 Z M12.5,440.1 H16.7 V444.4 L12.5,443.7 Z" fill="#111"/><rect x="25.3" y="429.5" width="178.3" height="20.5" fill="#fff"/><circle cx="37" cy="437.8" r="2.6" fill="none" stroke="#333" stroke-width="0.9"/><path d="M35.1,439.8 L31.6,443.4" stroke="#333" stroke-width="1"/><text x="46.30" y="443" font-size="8.2" fill="#505050" textLength="67.38" lengthAdjust="spacingAndGlyphs" >Type here to search</text><circle cx="216.4" cy="439.4" r="3.4" fill="none" stroke="#111" stroke-width="1.6"/><rect x="237.8" y="436.3" width="3.2" height="6.4" fill="none" stroke="#222" stroke-width="0.9"/><rect x="242.6" y="436.3" width="2.4" height="2.4" fill="none" stroke="#222" stroke-width="0.8"/><rect x="242.6" y="440.3" width="2.4" height="2.4" fill="none" stroke="#222" stroke-width="0.8"/><rect x="262.5" y="435.2" width="10.8" height="8.6" rx="0.6" fill="#f9c846"/><rect x="262.5" y="434.6" width="4.6" height="1.6" fill="#e0a418"/><rect x="262.5" y="437" width="10.8" height="1" fill="#f2b72c"/><rect x="264.3" y="440.2" width="7.2" height="1.6" fill="#2f88d8"/><rect x="264.3" y="441.5" width="1.5" height="2.3" fill="#2f88d8"/><rect x="270" y="441.5" width="1.5" height="2.3" fill="#2f88d8"/><rect x="257.8" y="448.6" width="21.4" height="1.4" fill="#2d7dd2"/><circle cx="293.8" cy="439.5" r="5" fill="#db4437"/><path d="M293.8,439.5 L298.2,442 A5,5 0 0 1 289,441 Z" fill="#0f9d58"/><path d="M293.8,439.5 L298.2,442 A5,5 0 0 0 298.8,438 Z" fill="#f4b400"/><circle cx="293.8" cy="439.5" r="2.3" fill="#fff"/><circle cx="293.8" cy="439.5" r="1.7" fill="#4285f4"/><rect x="314.5" y="434" width="11" height="11" fill="#1aa0dc"/><path d="M318.5,436.3 V442.5 H323" fill="none" stroke="#fff" stroke-width="1.6"/><path d="M339.8,434.3 L345,433.4 L350.2,434.3 V440.3 Q350.2,444.3 345,446.2 Q339.8,444.3 339.8,440.3 Z" fill="#d21a2a"/><path d="M341.5,435.6 L345,435 L348.5,435.6 V440.3 Q348.5,443.2 345,444.6 Q341.5,443.2 341.5,440.3 Z" fill="#fff"/><path d="M341.6,436 L345,439 L348.4,436 V441.5 L345,443.8 L341.6,441.5 Z" fill="#d21a2a"/><path d="M343,438.6 L345,440.4 L347,438.6 V441 L345,442.3 L343,441 Z" fill="#fff"/><rect x="359.3" y="429" width="23.7" height="21" fill="#f4f3ee"/><path d="M365.8,441.2 L369.8,438.6 L372.2,440 L369.5,443.2 Z" fill="#2f74c0"/><path d="M369.8,438.6 L373.6,433.6 L376.6,441.5 L378.6,444.6 L375.2,442.8 L372.3,445.2 L371.2,441.2 Z" fill="#e5561c"/><path d="M373.6,433.6 L376.6,441.5 L378.6,444.6 L375.6,440 Z" fill="#b83510"/><rect x="499.3" y="434.6" width="25.5" height="10.2" fill="#000" stroke="#f5f5f5" stroke-width="0.8"/><rect x="500" y="435.3" width="6.5" height="8.8" fill="#27a046"/><text x="505.20" y="442.6" font-size="7.2" fill="#fff" textLength="13.81" lengthAdjust="spacingAndGlyphs" >34%</text><circle cx="559.5" cy="439" r="4.3" fill="#f5b533"/><ellipse cx="562" cy="442" rx="3.8" ry="2.3" fill="#cfe0ee"/><text x="571.00" y="443" font-size="8.0" fill="#2a2a2a" textLength="15.43" lengthAdjust="spacingAndGlyphs" stroke="#2a2a2a" stroke-width="0.1">27°C</text><text x="590.60" y="443" font-size="8.0" fill="#2a2a2a" textLength="43.36" lengthAdjust="spacingAndGlyphs" stroke="#2a2a2a" stroke-width="0.1">Mostly sunny</text><path d="M643,441.5 L646.5,438 L650,441.5" fill="none" stroke="#333" stroke-width="0.9"/><rect x="657.8" y="436" width="3.5" height="6" rx="1.6" fill="none" stroke="#555" stroke-width="0.8"/><path d="M659.5,442 V444" stroke="#555" stroke-width="0.8"/><path d="M667.5,442.2 H675.8 A2.2,2.2 0 0 0 675.2,437.9 A3,3 0 0 0 669.6,438.1 A2.1,2.1 0 0 0 667.5,442.2 Z" fill="#d8d8d0" stroke="#666" stroke-width="0.8"/><rect x="680.5" y="437" width="7.5" height="5" fill="none" stroke="#333" stroke-width="0.8"/><rect x="681.2" y="437.7" width="3" height="3.6" fill="#333"/><circle cx="696.4" cy="439.5" r="4" fill="none" stroke="#333" stroke-width="0.8"/><ellipse cx="696.4" cy="439.5" rx="1.8" ry="4" fill="none" stroke="#333" stroke-width="0.6"/><path d="M692.4,439.5 H700.4" stroke="#333" stroke-width="0.6"/><path d="M704.5,438 H706 L708.5,435.5 V443.5 L706,441 H704.5 Z" fill="none" stroke="#333" stroke-width="0.7"/><path d="M710,437.5 Q711.3,439.5 710,441.5 M711.6,436.3 Q713.4,439.5 711.6,442.7" fill="none" stroke="#333" stroke-width="0.6"/><text x="719.00" y="443" font-size="7.0" fill="#333" textLength="11.98" lengthAdjust="spacingAndGlyphs" >ENG</text><text x="744.50" y="438" font-size="7.4" fill="#333" textLength="17.52" lengthAdjust="spacingAndGlyphs" >08:26</text><text x="737.40" y="446.8" font-size="7.4" fill="#333" textLength="32.03" lengthAdjust="spacingAndGlyphs" >17-08-2021</text><path d="M779.3,434.3 H790 V441.6 H782.5 L780.8,443.6 V441.6 H779.3 Z" fill="#1a1a1a"/><path d="M781,436.5 H788.3 M781,438.3 H788.3" stroke="#888" stroke-width="0.5"/><circle cx="786.3" cy="444.8" r="3.6" fill="#f4f4f4" stroke="#8a8a8a" stroke-width="0.6"/><text x="784.90" y="447.2" font-size="6.2" fill="#111" textLength="2.98" lengthAdjust="spacingAndGlyphs" >2</text>
</svg>
</body></html>
